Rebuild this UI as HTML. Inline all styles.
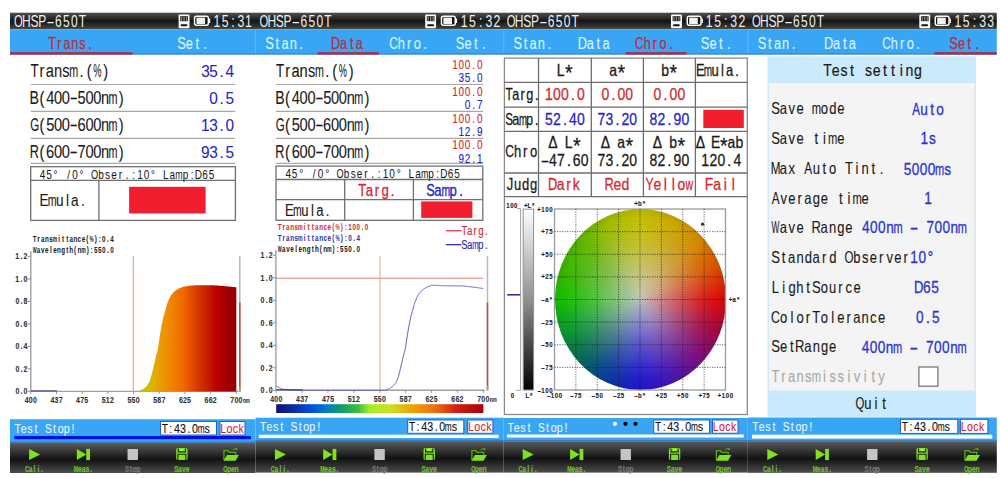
<!DOCTYPE html>
<html><head><meta charset="utf-8"><title>OHSP-650T</title>
<style>html,body{margin:0;padding:0;background:#fff;width:1000px;height:478px;overflow:hidden}svg{display:block}text{font-family:"Liberation Sans",sans-serif}</style>
</head><body>
<svg width="1000" height="478" viewBox="0 0 1000 478"><defs>
<linearGradient id="hdr" x1="0" y1="0" x2="0" y2="1"><stop offset="0" stop-color="#4e4e4c"/><stop offset="0.2" stop-color="#3a3a3a"/><stop offset="0.5" stop-color="#151515"/><stop offset="0.78" stop-color="#2c302c"/><stop offset="1" stop-color="#4a4e4a"/></linearGradient>
<linearGradient id="tb" x1="0" y1="0" x2="0" y2="1"><stop offset="0" stop-color="#5c5c5c"/><stop offset="0.55" stop-color="#121212"/><stop offset="1" stop-color="#4c4c4c"/></linearGradient>
<linearGradient id="fill1" x1="140" y1="0" x2="236" y2="0" gradientUnits="userSpaceOnUse"><stop offset="0" stop-color="#b8d000"/><stop offset="0.12" stop-color="#dcb400"/><stop offset="0.3" stop-color="#f08a00"/><stop offset="0.45" stop-color="#f06800"/><stop offset="0.62" stop-color="#d43400"/><stop offset="0.8" stop-color="#b80000"/><stop offset="1" stop-color="#900000"/></linearGradient>
<linearGradient id="spec" x1="0" y1="0" x2="1" y2="0"><stop offset="0" stop-color="#101070"/><stop offset="0.08" stop-color="#0a2ca0"/><stop offset="0.17" stop-color="#0050e0"/><stop offset="0.25" stop-color="#0080c0"/><stop offset="0.32" stop-color="#10a060"/><stop offset="0.4" stop-color="#40c040"/><stop offset="0.45" stop-color="#a0f020"/><stop offset="0.55" stop-color="#d0e020"/><stop offset="0.66" stop-color="#f0a000"/><stop offset="0.76" stop-color="#f07010"/><stop offset="0.87" stop-color="#d02010"/><stop offset="1" stop-color="#a80010"/></linearGradient>
<linearGradient id="lbar" x1="0" y1="0" x2="0" y2="1"><stop offset="0" stop-color="#ffffff"/><stop offset="0.5" stop-color="#909090"/><stop offset="1" stop-color="#000000"/></linearGradient>
</defs>
<rect x="0.00" y="0.00" width="1000.00" height="478.00" fill="#ffffff" />
<rect x="10.00" y="12.70" width="986.80" height="16.60" fill="url(#hdr)" />
<text transform="translate(0,27.00) scale(0.6560,1)" x="28.05" y="0" font-size="17.15" fill="#f0f0f0" text-anchor="middle" font-weight="normal" >O</text>
<text transform="translate(0,27.00) scale(0.7000,1)" x="37.71 49.15 60.32" y="0" font-size="17.15" fill="#f0f0f0" text-anchor="middle" font-weight="normal" >HSP</text>
<text transform="translate(0,27.00) scale(1.4902,1)" x="33.82" y="0" font-size="17.15" fill="#f0f0f0" text-anchor="middle" font-weight="normal" >-</text>
<text transform="translate(0,27.00) scale(0.7000,1)" x="83.37 94.87 106.29 117.72" y="0" font-size="17.15" fill="#f0f0f0" text-anchor="middle" font-weight="normal" >650T</text>
<rect x="178.60" y="14.60" width="10.9" height="13.6" rx="1.2" fill="#ffffff"/>
<rect x="180.20" y="16.20" width="7.70" height="5.00" fill="#141414" />
<rect x="180.90" y="16.60" width="1.30" height="4.20" fill="#8a8a8a" />
<rect x="183.40" y="16.60" width="1.30" height="4.20" fill="#8a8a8a" />
<rect x="185.90" y="16.60" width="1.30" height="4.20" fill="#8a8a8a" />
<rect x="180.60" y="24.30" width="6.8" height="1.9" rx="0.9" fill="#141414"/>
<rect x="194.55" y="16.15" width="13.8" height="9.2" rx="2" fill="#141414" stroke="#fff" stroke-width="1.5"/>
<rect x="196.50" y="17.60" width="8.60" height="6.40" fill="#f4f4f4" />
<rect x="209.00" y="18.60" width="1.20" height="4.40" fill="#fff" />
<text transform="translate(0,27.00) scale(0.7400,1)" x="293.21 304.12 314.76 325.47 335.86" y="0" font-size="16.57" fill="#f0f0f0" text-anchor="middle" font-weight="normal" >15:31</text>
<rect x="10.00" y="29.30" width="986.80" height="25.00" fill="#38a6f4" />
<text transform="translate(0,48.60) scale(0.7800,1)" x="66.80 76.13 85.93 96.01 105.84 115.51" y="0" font-size="16.43" fill="#c8283e" text-anchor="middle" font-weight="normal" stroke="#c8283e" stroke-width="0.3" >Trans.</text>
<text transform="translate(0,48.60) scale(0.7800,1)" x="232.63 242.77 252.82 263.01" y="0" font-size="16.43" fill="#d6f3ff" text-anchor="middle" font-weight="normal" stroke="#d6f3ff" stroke-width="0.2" >Set.</text>
<rect x="10.00" y="53.40" width="245.50" height="1.20" fill="#3c84c4" />
<rect x="10.00" y="52.10" width="122.60" height="2.50" fill="#a8304e" />
<text transform="translate(0,77.30) scale(0.7641,1)" x="45.19" y="0" font-size="17.44" fill="#1a1a1a" text-anchor="middle" font-weight="normal" stroke="#1a1a1a" stroke-width="0.1" >T</text>
<text transform="translate(0,77.30) scale(0.8400,1)" x="50.01 59.42 69.12 78.55" y="0" font-size="17.44" fill="#1a1a1a" text-anchor="middle" font-weight="normal" stroke="#1a1a1a" stroke-width="0.1" >rans</text>
<text transform="translate(0,77.30) scale(0.6166,1)" x="119.64" y="0" font-size="17.44" fill="#1a1a1a" text-anchor="middle" font-weight="normal" stroke="#1a1a1a" stroke-width="0.1" >m</text>
<text transform="translate(0,77.30) scale(0.8400,1)" x="97.17 106.03" y="0" font-size="17.44" fill="#1a1a1a" text-anchor="middle" font-weight="normal" stroke="#1a1a1a" stroke-width="0.1" >.(</text>
<text transform="translate(0,77.30) scale(0.5283,1)" x="184.22" y="0" font-size="17.44" fill="#1a1a1a" text-anchor="middle" font-weight="normal" stroke="#1a1a1a" stroke-width="0.1" >%</text>
<text transform="translate(0,77.30) scale(0.8400,1)" x="125.70" y="0" font-size="17.44" fill="#1a1a1a" text-anchor="middle" font-weight="normal" stroke="#1a1a1a" stroke-width="0.1" >)</text>
<text transform="translate(0,77.30) scale(0.9200,1)" x="223.28 232.11 240.95 249.86" y="0" font-size="16.71" fill="#2626c4" text-anchor="middle" font-weight="normal" stroke="#2626c4" stroke-width="0.1" >35.4</text>
<line x1="30.70" y1="84.50" x2="235.20" y2="84.50" stroke="#a8a8a8" stroke-width="1.2" />
<text transform="translate(0,104.20) scale(0.8118,1)" x="42.27" y="0" font-size="17.44" fill="#1a1a1a" text-anchor="middle" font-weight="normal" stroke="#1a1a1a" stroke-width="0.1" >B</text>
<text transform="translate(0,104.20) scale(0.8400,1)" x="49.96 59.85 69.14 78.48" y="0" font-size="17.44" fill="#1a1a1a" text-anchor="middle" font-weight="normal" stroke="#1a1a1a" stroke-width="0.1" >(400</text>
<text transform="translate(0,104.20) scale(1.4379,1)" x="51.31" y="0" font-size="17.44" fill="#1a1a1a" text-anchor="middle" font-weight="normal" stroke="#1a1a1a" stroke-width="0.1" >-</text>
<text transform="translate(0,104.20) scale(0.8400,1)" x="97.19 106.52 115.86 125.20" y="0" font-size="17.44" fill="#1a1a1a" text-anchor="middle" font-weight="normal" stroke="#1a1a1a" stroke-width="0.1" >500n</text>
<text transform="translate(0,104.20) scale(0.6166,1)" x="183.30" y="0" font-size="17.44" fill="#1a1a1a" text-anchor="middle" font-weight="normal" stroke="#1a1a1a" stroke-width="0.1" >m</text>
<text transform="translate(0,104.20) scale(0.8400,1)" x="144.39" y="0" font-size="17.44" fill="#1a1a1a" text-anchor="middle" font-weight="normal" stroke="#1a1a1a" stroke-width="0.1" >)</text>
<text transform="translate(0,104.20) scale(0.9200,1)" x="232.09 240.95 249.83" y="0" font-size="16.71" fill="#2626c4" text-anchor="middle" font-weight="normal" stroke="#2626c4" stroke-width="0.1" >0.5</text>
<line x1="30.70" y1="111.40" x2="235.20" y2="111.40" stroke="#a8a8a8" stroke-width="1.2" />
<text transform="translate(0,131.10) scale(0.6618,1)" x="52.38" y="0" font-size="17.44" fill="#1a1a1a" text-anchor="middle" font-weight="normal" stroke="#1a1a1a" stroke-width="0.1" >G</text>
<text transform="translate(0,131.10) scale(0.8400,1)" x="49.96 59.81 69.14 78.48" y="0" font-size="17.44" fill="#1a1a1a" text-anchor="middle" font-weight="normal" stroke="#1a1a1a" stroke-width="0.1" >(500</text>
<text transform="translate(0,131.10) scale(1.4379,1)" x="51.31" y="0" font-size="17.44" fill="#1a1a1a" text-anchor="middle" font-weight="normal" stroke="#1a1a1a" stroke-width="0.1" >-</text>
<text transform="translate(0,131.10) scale(0.8400,1)" x="97.11 106.52 115.86 125.20" y="0" font-size="17.44" fill="#1a1a1a" text-anchor="middle" font-weight="normal" stroke="#1a1a1a" stroke-width="0.1" >600n</text>
<text transform="translate(0,131.10) scale(0.6166,1)" x="183.30" y="0" font-size="17.44" fill="#1a1a1a" text-anchor="middle" font-weight="normal" stroke="#1a1a1a" stroke-width="0.1" >m</text>
<text transform="translate(0,131.10) scale(0.8400,1)" x="144.39" y="0" font-size="17.44" fill="#1a1a1a" text-anchor="middle" font-weight="normal" stroke="#1a1a1a" stroke-width="0.1" >)</text>
<text transform="translate(0,131.10) scale(0.9200,1)" x="223.01 232.14 240.95 249.81" y="0" font-size="16.71" fill="#2626c4" text-anchor="middle" font-weight="normal" stroke="#2626c4" stroke-width="0.1" >13.0</text>
<line x1="30.70" y1="138.30" x2="235.20" y2="138.30" stroke="#a8a8a8" stroke-width="1.2" />
<text transform="translate(0,158.00) scale(0.7277,1)" x="47.13" y="0" font-size="17.44" fill="#1a1a1a" text-anchor="middle" font-weight="normal" stroke="#1a1a1a" stroke-width="0.1" >R</text>
<text transform="translate(0,158.00) scale(0.8400,1)" x="49.96 59.73 69.14 78.48" y="0" font-size="17.44" fill="#1a1a1a" text-anchor="middle" font-weight="normal" stroke="#1a1a1a" stroke-width="0.1" >(600</text>
<text transform="translate(0,158.00) scale(1.4379,1)" x="51.31" y="0" font-size="17.44" fill="#1a1a1a" text-anchor="middle" font-weight="normal" stroke="#1a1a1a" stroke-width="0.1" >-</text>
<text transform="translate(0,158.00) scale(0.8400,1)" x="97.16 106.52 115.86 125.20" y="0" font-size="17.44" fill="#1a1a1a" text-anchor="middle" font-weight="normal" stroke="#1a1a1a" stroke-width="0.1" >700n</text>
<text transform="translate(0,158.00) scale(0.6166,1)" x="183.30" y="0" font-size="17.44" fill="#1a1a1a" text-anchor="middle" font-weight="normal" stroke="#1a1a1a" stroke-width="0.1" >m</text>
<text transform="translate(0,158.00) scale(0.8400,1)" x="144.39" y="0" font-size="17.44" fill="#1a1a1a" text-anchor="middle" font-weight="normal" stroke="#1a1a1a" stroke-width="0.1" >)</text>
<text transform="translate(0,158.00) scale(0.9200,1)" x="223.24 232.14 240.95 249.83" y="0" font-size="16.71" fill="#2626c4" text-anchor="middle" font-weight="normal" stroke="#2626c4" stroke-width="0.1" >93.5</text>
<line x1="30.70" y1="163.30" x2="235.20" y2="163.30" stroke="#a8a8a8" stroke-width="1.2" />
<rect x="30.7" y="166.7" width="204.7" height="53.7" fill="none" stroke="#707070" stroke-width="1.3"/>
<line x1="30.70" y1="180.30" x2="235.40" y2="180.30" stroke="#707070" stroke-width="1.3" />
<line x1="98.90" y1="180.30" x2="98.90" y2="220.40" stroke="#707070" stroke-width="1.3" />
<text transform="translate(0,178.60) scale(0.8000,1)" x="53.23 61.32 69.44 85.69 93.81 101.94" y="0" font-size="12.50" fill="#1a1a1a" text-anchor="middle" font-weight="normal" stroke="#1a1a1a" stroke-width="0.05" >45°/0°</text>
<text transform="translate(0,178.60) scale(0.7313,1)" x="129.29" y="0" font-size="12.50" fill="#1a1a1a" text-anchor="middle" font-weight="normal" stroke="#1a1a1a" stroke-width="0.05" >O</text>
<text transform="translate(0,178.60) scale(0.8000,1)" x="126.17 134.49 142.57 150.38 158.81 166.94 174.89 183.19 191.32 207.26 215.42" y="0" font-size="12.50" fill="#1a1a1a" text-anchor="middle" font-weight="normal" stroke="#1a1a1a" stroke-width="0.05" >bser.:10°La</text>
<text transform="translate(0,178.60) scale(0.7124,1)" x="251.33" y="0" font-size="12.50" fill="#1a1a1a" text-anchor="middle" font-weight="normal" stroke="#1a1a1a" stroke-width="0.05" >m</text>
<text transform="translate(0,178.60) scale(0.8000,1)" x="231.80 240.06 247.97 256.27 264.45" y="0" font-size="12.50" fill="#1a1a1a" text-anchor="middle" font-weight="normal" stroke="#1a1a1a" stroke-width="0.05" >p:D65</text>
<text transform="translate(0,206.30) scale(0.8000,1)" x="55.11" y="0" font-size="17.01" fill="#1a1a1a" text-anchor="middle" font-weight="normal" stroke="#1a1a1a" stroke-width="0.12" >E</text>
<text transform="translate(0,206.30) scale(0.6203,1)" x="83.91" y="0" font-size="17.01" fill="#1a1a1a" text-anchor="middle" font-weight="normal" stroke="#1a1a1a" stroke-width="0.12" >m</text>
<text transform="translate(0,206.30) scale(0.8000,1)" x="74.70 84.31 93.58 103.56" y="0" font-size="17.01" fill="#1a1a1a" text-anchor="middle" font-weight="normal" stroke="#1a1a1a" stroke-width="0.12" >ula.</text>
<rect x="129.10" y="186.80" width="76.50" height="26.60" fill="#f01e2e" />
<line x1="30.80" y1="251.30" x2="30.80" y2="391.40" stroke="#a0a0a0" stroke-width="1.4" />
<line x1="30.80" y1="391.40" x2="238.50" y2="391.40" stroke="#a0a0a0" stroke-width="1.4" />
<line x1="27.80" y1="391.40" x2="30.80" y2="391.40" stroke="#909090" stroke-width="1" />
<text transform="translate(0,394.30) scale(0.8000,1)" x="21.69 26.82 31.94" y="0" font-size="8.72" fill="#333" text-anchor="middle" font-weight="bold" stroke="#333" stroke-width="0.12" >0.0</text>
<line x1="27.80" y1="368.90" x2="30.80" y2="368.90" stroke="#909090" stroke-width="1" />
<text transform="translate(0,371.80) scale(0.8000,1)" x="21.69 26.82 31.96" y="0" font-size="8.72" fill="#333" text-anchor="middle" font-weight="bold" stroke="#333" stroke-width="0.12" >0.2</text>
<line x1="27.80" y1="346.40" x2="30.80" y2="346.40" stroke="#909090" stroke-width="1" />
<text transform="translate(0,349.30) scale(0.8000,1)" x="21.69 26.82 31.89" y="0" font-size="8.72" fill="#333" text-anchor="middle" font-weight="bold" stroke="#333" stroke-width="0.12" >0.4</text>
<line x1="27.80" y1="323.90" x2="30.80" y2="323.90" stroke="#909090" stroke-width="1" />
<text transform="translate(0,326.80) scale(0.8000,1)" x="21.69 26.82 31.94" y="0" font-size="8.72" fill="#333" text-anchor="middle" font-weight="bold" stroke="#333" stroke-width="0.12" >0.6</text>
<line x1="27.80" y1="301.40" x2="30.80" y2="301.40" stroke="#909090" stroke-width="1" />
<text transform="translate(0,304.30) scale(0.8000,1)" x="21.69 26.82 31.93" y="0" font-size="8.72" fill="#333" text-anchor="middle" font-weight="bold" stroke="#333" stroke-width="0.12" >0.8</text>
<line x1="27.80" y1="278.90" x2="30.80" y2="278.90" stroke="#909090" stroke-width="1" />
<text transform="translate(0,281.80) scale(0.8000,1)" x="21.53 26.82 31.94" y="0" font-size="8.72" fill="#333" text-anchor="middle" font-weight="bold" stroke="#333" stroke-width="0.12" >1.0</text>
<line x1="27.80" y1="256.40" x2="30.80" y2="256.40" stroke="#909090" stroke-width="1" />
<text transform="translate(0,259.30) scale(0.8000,1)" x="21.53 26.82 31.96" y="0" font-size="8.72" fill="#333" text-anchor="middle" font-weight="bold" stroke="#333" stroke-width="0.12" >1.2</text>
<line x1="30.80" y1="391.40" x2="30.80" y2="393.90" stroke="#909090" stroke-width="1" />
<text transform="translate(0,402.60) scale(0.8000,1)" x="33.33 38.51 43.63" y="0" font-size="8.72" fill="#333" text-anchor="middle" font-weight="bold" stroke="#333" stroke-width="0.12" >400</text>
<line x1="56.49" y1="391.40" x2="56.49" y2="393.90" stroke="#909090" stroke-width="1" />
<text transform="translate(0,402.60) scale(0.8000,1)" x="65.44 70.67 75.74" y="0" font-size="8.72" fill="#333" text-anchor="middle" font-weight="bold" stroke="#333" stroke-width="0.12" >437</text>
<line x1="82.18" y1="391.40" x2="82.18" y2="393.90" stroke="#909090" stroke-width="1" />
<text transform="translate(0,402.60) scale(0.8000,1)" x="97.56 102.73 107.84" y="0" font-size="8.72" fill="#333" text-anchor="middle" font-weight="bold" stroke="#333" stroke-width="0.12" >475</text>
<line x1="107.87" y1="391.40" x2="107.87" y2="393.90" stroke="#909090" stroke-width="1" />
<text transform="translate(0,402.60) scale(0.8000,1)" x="129.70 134.68 139.99" y="0" font-size="8.72" fill="#333" text-anchor="middle" font-weight="bold" stroke="#333" stroke-width="0.12" >512</text>
<line x1="133.56" y1="391.40" x2="133.56" y2="393.90" stroke="#909090" stroke-width="1" />
<text transform="translate(0,402.60) scale(0.8000,1)" x="161.81 166.94 172.08" y="0" font-size="8.72" fill="#333" text-anchor="middle" font-weight="bold" stroke="#333" stroke-width="0.12" >550</text>
<line x1="159.25" y1="391.40" x2="159.25" y2="393.90" stroke="#909090" stroke-width="1" />
<text transform="translate(0,402.60) scale(0.8000,1)" x="193.92 199.06 204.19" y="0" font-size="8.72" fill="#333" text-anchor="middle" font-weight="bold" stroke="#333" stroke-width="0.12" >587</text>
<line x1="184.94" y1="391.40" x2="184.94" y2="393.90" stroke="#909090" stroke-width="1" />
<text transform="translate(0,402.60) scale(0.8000,1)" x="226.05 231.20 236.29" y="0" font-size="8.72" fill="#333" text-anchor="middle" font-weight="bold" stroke="#333" stroke-width="0.12" >625</text>
<line x1="210.63" y1="391.40" x2="210.63" y2="393.90" stroke="#909090" stroke-width="1" />
<text transform="translate(0,402.60) scale(0.8000,1)" x="258.16 263.29 268.44" y="0" font-size="8.72" fill="#333" text-anchor="middle" font-weight="bold" stroke="#333" stroke-width="0.12" >662</text>
<line x1="236.32" y1="391.40" x2="236.32" y2="393.90" stroke="#909090" stroke-width="1" />
<text transform="translate(0,402.60) scale(0.8000,1)" x="290.28 295.41 300.53" y="0" font-size="8.72" fill="#333" text-anchor="middle" font-weight="bold" stroke="#333" stroke-width="0.12" >700</text>
<text transform="translate(0,402.60) scale(0.8000,1)" x="305.64" y="0" font-size="6.54" fill="#333" text-anchor="middle" font-weight="bold" stroke="#333" stroke-width="0.12" >n</text>
<text transform="translate(0,402.60) scale(0.6555,1)" x="378.20" y="0" font-size="6.54" fill="#333" text-anchor="middle" font-weight="bold" stroke="#333" stroke-width="0.12" >m</text>
<text transform="translate(0,241.90) scale(0.7200,1)" x="48.10 53.54 59.25 65.05 70.74" y="0" font-size="8.72" fill="#222" text-anchor="middle" font-weight="bold" stroke="#222" stroke-width="0.05" >Trans</text>
<text transform="translate(0,241.90) scale(0.5885,1)" x="93.42" y="0" font-size="8.72" fill="#222" text-anchor="middle" font-weight="bold" stroke="#222" stroke-width="0.05" >m</text>
<text transform="translate(0,241.90) scale(0.7200,1)" x="82.03 87.67 93.33 98.82 104.61 110.24 115.92 121.38" y="0" font-size="8.72" fill="#222" text-anchor="middle" font-weight="bold" stroke="#222" stroke-width="0.05" >ittance(</text>
<text transform="translate(0,241.90) scale(0.5347,1)" x="171.35" y="0" font-size="8.72" fill="#222" text-anchor="middle" font-weight="bold" stroke="#222" stroke-width="0.05" >%</text>
<text transform="translate(0,241.90) scale(0.7200,1)" x="133.11 138.55 144.21 149.86 155.46" y="0" font-size="8.72" fill="#222" text-anchor="middle" font-weight="bold" stroke="#222" stroke-width="0.05" >):0.4</text>
<text transform="translate(0,252.90) scale(0.4757,1)" x="72.81" y="0" font-size="8.72" fill="#222" text-anchor="middle" font-weight="bold" stroke="#222" stroke-width="0.05" >W</text>
<text transform="translate(0,252.90) scale(0.7200,1)" x="53.60 59.41 65.04 70.72 76.35 82.00 87.79 93.33 98.95 104.42 110.27" y="0" font-size="8.72" fill="#222" text-anchor="middle" font-weight="bold" stroke="#222" stroke-width="0.05" >avelength(n</text>
<text transform="translate(0,252.90) scale(0.5885,1)" x="141.83" y="0" font-size="8.72" fill="#222" text-anchor="middle" font-weight="bold" stroke="#222" stroke-width="0.05" >m</text>
<text transform="translate(0,252.90) scale(0.7200,1)" x="121.80 127.24 132.88 138.54 144.21 149.86 155.51" y="0" font-size="8.72" fill="#222" text-anchor="middle" font-weight="bold" stroke="#222" stroke-width="0.05" >):550.0</text>
<path d="M136.30,391.40 L136.30,391.40 L136.64,391.40 L136.99,391.40 L137.33,391.38 L137.67,391.33 L138.01,391.24 L138.36,391.14 L138.70,391.02 L139.04,390.88 L139.38,390.74 L139.73,390.61 L140.07,390.47 L140.41,390.34 L140.75,390.20 L141.10,390.05 L141.44,389.88 L141.78,389.71 L142.12,389.53 L142.47,389.34 L142.81,389.14 L143.15,388.92 L143.49,388.70 L143.84,388.46 L144.18,388.21 L144.52,387.95 L144.86,387.67 L145.21,387.38 L145.55,387.07 L145.89,386.74 L146.23,386.39 L146.58,386.02 L146.92,385.63 L147.26,385.22 L147.60,384.79 L147.95,384.30 L148.29,383.75 L148.63,383.15 L148.97,382.48 L149.32,381.76 L149.66,380.98 L150.00,380.15 L150.34,379.19 L150.69,378.07 L151.03,376.83 L151.37,375.51 L151.71,374.17 L152.06,372.84 L152.40,371.51 L152.74,370.13 L153.08,368.73 L153.43,367.30 L153.77,365.85 L154.11,364.40 L154.45,362.92 L154.80,361.39 L155.14,359.84 L155.48,358.31 L155.82,356.82 L156.17,355.40 L156.51,354.12 L156.85,352.94 L157.19,351.74 L157.54,350.39 L157.88,348.75 L158.22,346.75 L158.56,344.51 L158.91,342.11 L159.25,339.68 L159.59,337.33 L159.94,335.15 L160.28,333.10 L160.62,331.06 L160.96,329.06 L161.31,327.10 L161.65,325.22 L161.99,323.42 L162.33,321.73 L162.68,320.16 L163.02,318.69 L163.36,317.29 L163.70,315.96 L164.05,314.67 L164.39,313.40 L164.73,312.15 L165.07,310.89 L165.42,309.63 L165.76,308.38 L166.10,307.17 L166.44,306.00 L166.79,304.89 L167.13,303.84 L167.47,302.88 L167.81,302.00 L168.16,301.16 L168.50,300.34 L168.84,299.55 L169.18,298.79 L169.53,298.06 L169.87,297.38 L170.21,296.73 L170.55,296.13 L170.90,295.57 L171.24,295.06 L171.58,294.60 L171.92,294.15 L172.27,293.72 L172.61,293.31 L172.95,292.91 L173.29,292.53 L173.64,292.17 L173.98,291.83 L174.32,291.50 L174.66,291.19 L175.01,290.90 L175.35,290.63 L175.69,290.37 L176.03,290.14 L176.38,289.92 L176.72,289.72 L177.06,289.52 L177.40,289.33 L177.75,289.14 L178.09,288.95 L178.43,288.77 L178.77,288.59 L179.12,288.42 L179.46,288.25 L179.80,288.09 L180.14,287.93 L180.49,287.78 L180.83,287.63 L181.17,287.50 L181.51,287.36 L181.86,287.24 L182.20,287.12 L182.54,287.01 L182.88,286.90 L183.23,286.81 L183.57,286.72 L183.91,286.63 L184.25,286.56 L184.60,286.49 L184.94,286.44 L185.28,286.38 L185.63,286.33 L185.97,286.28 L186.31,286.23 L186.65,286.18 L187.00,286.13 L187.34,286.08 L187.68,286.04 L188.02,285.99 L188.37,285.94 L188.71,285.90 L189.05,285.86 L189.39,285.81 L189.74,285.77 L190.08,285.73 L190.42,285.70 L190.76,285.66 L191.11,285.62 L191.45,285.59 L191.79,285.55 L192.13,285.52 L192.48,285.49 L192.82,285.46 L193.16,285.43 L193.50,285.40 L193.85,285.38 L194.19,285.36 L194.53,285.33 L194.87,285.31 L195.22,285.29 L195.56,285.28 L195.90,285.26 L196.24,285.25 L196.59,285.23 L196.93,285.22 L197.27,285.22 L197.61,285.21 L197.96,285.20 L198.30,285.20 L198.64,285.20 L198.98,285.20 L199.33,285.20 L199.67,285.20 L200.01,285.20 L200.35,285.20 L200.70,285.20 L201.04,285.20 L201.38,285.21 L201.72,285.21 L202.07,285.21 L202.41,285.21 L202.75,285.21 L203.09,285.21 L203.44,285.22 L203.78,285.22 L204.12,285.22 L204.46,285.22 L204.81,285.23 L205.15,285.23 L205.49,285.23 L205.83,285.23 L206.18,285.24 L206.52,285.24 L206.86,285.24 L207.20,285.25 L207.55,285.25 L207.89,285.25 L208.23,285.26 L208.57,285.26 L208.92,285.27 L209.26,285.27 L209.60,285.28 L209.94,285.28 L210.29,285.28 L210.63,285.29 L210.97,285.29 L211.32,285.30 L211.66,285.30 L212.00,285.31 L212.34,285.31 L212.69,285.32 L213.03,285.33 L213.37,285.33 L213.71,285.35 L214.06,285.36 L214.40,285.37 L214.74,285.38 L215.08,285.40 L215.43,285.42 L215.77,285.44 L216.11,285.46 L216.45,285.48 L216.80,285.50 L217.14,285.52 L217.48,285.54 L217.82,285.57 L218.17,285.59 L218.51,285.62 L218.85,285.64 L219.19,285.67 L219.54,285.70 L219.88,285.73 L220.22,285.76 L220.56,285.79 L220.91,285.81 L221.25,285.84 L221.59,285.87 L221.93,285.91 L222.28,285.94 L222.62,285.97 L222.96,286.00 L223.30,286.03 L223.65,286.06 L223.99,286.09 L224.33,286.12 L224.67,286.15 L225.02,286.18 L225.36,286.21 L225.70,286.24 L226.04,286.27 L226.39,286.30 L226.73,286.33 L227.07,286.36 L227.41,286.39 L227.76,286.42 L228.10,286.46 L228.44,286.49 L228.78,286.52 L229.13,286.56 L229.47,286.60 L229.81,286.63 L230.15,286.67 L230.50,286.70 L230.84,286.74 L231.18,286.78 L231.52,286.82 L231.87,286.85 L232.21,286.89 L232.55,286.93 L232.89,286.97 L233.24,287.00 L233.58,287.04 L233.92,287.08 L234.26,287.12 L234.61,287.15 L234.95,287.19 L235.29,287.23 L235.63,287.27 L235.98,287.30 L236.32,287.34 L236.32,391.40 z" fill="url(#fill1)"/>
<line x1="133.40" y1="256.20" x2="133.40" y2="391.40" stroke="#d8b49a" stroke-width="1.4" />
<line x1="239.80" y1="256.20" x2="239.80" y2="391.40" stroke="#b8b8b8" stroke-width="1.5" />
<line x1="239.80" y1="302.60" x2="239.80" y2="391.40" stroke="#d04050" stroke-width="1.5" />
<line x1="239.80" y1="386.80" x2="239.80" y2="391.40" stroke="#60d060" stroke-width="1.5" />
<line x1="31.00" y1="390.90" x2="57.00" y2="390.90" stroke="#30308a" stroke-width="1.0" />
<rect x="10.00" y="419.20" width="245.50" height="23.60" fill="#38a6f4" />
<text transform="translate(0,432.80) scale(0.7808,1)" x="22.64" y="0" font-size="13.37" fill="#e6f4ff" text-anchor="middle" font-weight="normal" stroke="#e6f4ff" stroke-width="0.12" >T</text>
<text transform="translate(0,432.80) scale(0.8000,1)" x="29.79 37.52 45.10" y="0" font-size="13.37" fill="#e6f4ff" text-anchor="middle" font-weight="normal" stroke="#e6f4ff" stroke-width="0.12" >est</text>
<text transform="translate(0,432.80) scale(0.7669,1)" x="63.15" y="0" font-size="13.37" fill="#e6f4ff" text-anchor="middle" font-weight="normal" stroke="#e6f4ff" stroke-width="0.12" >S</text>
<text transform="translate(0,432.80) scale(0.8000,1)" x="68.17 75.91 83.44 91.28" y="0" font-size="13.37" fill="#e6f4ff" text-anchor="middle" font-weight="normal" stroke="#e6f4ff" stroke-width="0.12" >top!</text>
<rect x="160.50" y="421.50" width="56.00" height="13.50" fill="#ffffff" stroke="#1f63c6" stroke-width="1"/>
<text transform="translate(0,432.80) scale(0.7681,1)" x="214.59" y="0" font-size="13.37" fill="#111" text-anchor="middle" font-weight="normal" stroke="#111" stroke-width="0.12" >T</text>
<text transform="translate(0,432.80) scale(0.8000,1)" x="213.59 221.20 228.76 236.28 243.84" y="0" font-size="13.37" fill="#111" text-anchor="middle" font-weight="normal" stroke="#111" stroke-width="0.12" >:43.0</text>
<text transform="translate(0,432.80) scale(0.6199,1)" x="324.44" y="0" font-size="13.37" fill="#111" text-anchor="middle" font-weight="normal" stroke="#111" stroke-width="0.12" >m</text>
<text transform="translate(0,432.80) scale(0.8000,1)" x="259.02" y="0" font-size="13.37" fill="#111" text-anchor="middle" font-weight="normal" stroke="#111" stroke-width="0.12" >s</text>
<rect x="220.00" y="421.50" width="25.00" height="13.50" fill="#ffffff" stroke="#1f63c6" stroke-width="1"/>
<text transform="translate(0,432.80) scale(0.8000,1)" x="279.17 287.00 294.39 301.54" y="0" font-size="13.37" fill="#d42836" text-anchor="middle" font-weight="normal" stroke="#d42836" stroke-width="0.12" >Lock</text>
<rect x="10.00" y="441.50" width="245.50" height="1.30" fill="#3a7cba" />
<rect x="14.30" y="436.00" width="236.70" height="3.20" fill="#0010e0" />
<rect x="10.00" y="442.80" width="245.50" height="30.20" fill="url(#tb)" />
<path d="M29.15,448.90 L40.15,454.50 L29.15,460.10 z" fill="#7ee21c"/>
<path d="M76.85,448.90 L86.25,454.50 L76.85,460.10 z" fill="#7ee21c"/>
<rect x="86.25" y="448.90" width="3.80" height="11.20" fill="#7ee21c" />
<rect x="127.55" y="449.00" width="10.40" height="11.00" fill="#c4c4c4" />
<rect x="176.15" y="448.10" width="11.4" height="12.0" rx="1.6" fill="#7ee21c"/>
<path d="M178.25,448.50 V451.90 H185.45 V448.50" fill="none" stroke="#1c2a10" stroke-width="1.1"/>
<rect x="180.25" y="448.90" width="3.00" height="2.00" fill="#a8f060" />
<path d="M177.85,459.90 V454.30 H185.85 V459.90" fill="none" stroke="#1c2a10" stroke-width="1.1"/>
<path d="M223.95,460.30 L223.95,450.70 L227.95,450.70 L229.35,452.30 L235.75,452.30 L235.75,454.70" fill="none" stroke="#5aa818" stroke-width="1.3"/>
<path d="M223.55,460.70 L226.95,454.90 L238.95,454.90 L235.55,460.70 z" fill="#7ee21c"/>
<circle cx="236.55" cy="449.10" r="1.1" fill="#5aa818"/>
<path d="M232.55,450.30 Q234.55,447.90 235.95,448.70" fill="none" stroke="#5aa818" stroke-width="1"/>
<text transform="translate(0,471.60) scale(0.6618,1)" x="40.66" y="0" font-size="8.43" fill="#6cc81e" text-anchor="middle" font-weight="bold" stroke="#6cc81e" stroke-width="0.12" >C</text>
<text transform="translate(0,471.60) scale(0.8000,1)" x="38.29 43.19 47.94 52.69" y="0" font-size="8.43" fill="#6cc81e" text-anchor="middle" font-weight="bold" stroke="#6cc81e" stroke-width="0.12" >ali.</text>
<text transform="translate(0,471.60) scale(0.6189,1)" x="122.88" y="0" font-size="8.43" fill="#6cc81e" text-anchor="middle" font-weight="bold" stroke="#6cc81e" stroke-width="0.12" >M</text>
<text transform="translate(0,471.60) scale(0.8000,1)" x="99.79 104.41 109.34 114.07" y="0" font-size="8.43" fill="#6cc81e" text-anchor="middle" font-weight="bold" stroke="#6cc81e" stroke-width="0.12" >eas.</text>
<text transform="translate(0,471.60) scale(0.7223,1)" x="175.94" y="0" font-size="8.43" fill="#7c7c7c" text-anchor="middle" font-weight="bold" stroke="#7c7c7c" stroke-width="0.12" >S</text>
<text transform="translate(0,471.60) scale(0.8000,1)" x="163.56 168.31 172.96" y="0" font-size="8.43" fill="#7c7c7c" text-anchor="middle" font-weight="bold" stroke="#7c7c7c" stroke-width="0.12" >top</text>
<text transform="translate(0,471.60) scale(0.7223,1)" x="243.92" y="0" font-size="8.43" fill="#6cc81e" text-anchor="middle" font-weight="bold" stroke="#6cc81e" stroke-width="0.12" >S</text>
<text transform="translate(0,471.60) scale(0.8000,1)" x="224.79" y="0" font-size="8.43" fill="#6cc81e" text-anchor="middle" font-weight="bold" stroke="#6cc81e" stroke-width="0.12" >a</text>
<text transform="translate(0,471.60) scale(0.7899,1)" x="232.63" y="0" font-size="8.43" fill="#6cc81e" text-anchor="middle" font-weight="bold" stroke="#6cc81e" stroke-width="0.12" >v</text>
<text transform="translate(0,471.60) scale(0.8000,1)" x="234.42" y="0" font-size="8.43" fill="#6cc81e" text-anchor="middle" font-weight="bold" stroke="#6cc81e" stroke-width="0.12" >e</text>
<text transform="translate(0,471.60) scale(0.6228,1)" x="361.68" y="0" font-size="8.43" fill="#6cc81e" text-anchor="middle" font-weight="bold" stroke="#6cc81e" stroke-width="0.12" >O</text>
<text transform="translate(0,471.60) scale(0.8000,1)" x="286.21 291.04 295.80" y="0" font-size="8.43" fill="#6cc81e" text-anchor="middle" font-weight="bold" stroke="#6cc81e" stroke-width="0.12" >pen</text>
<text transform="translate(0,27.00) scale(0.6560,1)" x="402.14" y="0" font-size="17.15" fill="#f0f0f0" text-anchor="middle" font-weight="normal" >O</text>
<text transform="translate(0,27.00) scale(0.7000,1)" x="388.28 399.72 410.89" y="0" font-size="17.15" fill="#f0f0f0" text-anchor="middle" font-weight="normal" >HSP</text>
<text transform="translate(0,27.00) scale(1.4902,1)" x="198.50" y="0" font-size="17.15" fill="#f0f0f0" text-anchor="middle" font-weight="normal" >-</text>
<text transform="translate(0,27.00) scale(0.7000,1)" x="433.94 445.45 456.86 468.29" y="0" font-size="17.15" fill="#f0f0f0" text-anchor="middle" font-weight="normal" >650T</text>
<rect x="425.20" y="14.60" width="10.9" height="13.6" rx="1.2" fill="#ffffff"/>
<rect x="426.80" y="16.20" width="7.70" height="5.00" fill="#141414" />
<rect x="427.50" y="16.60" width="1.30" height="4.20" fill="#8a8a8a" />
<rect x="430.00" y="16.60" width="1.30" height="4.20" fill="#8a8a8a" />
<rect x="432.50" y="16.60" width="1.30" height="4.20" fill="#8a8a8a" />
<rect x="427.20" y="24.30" width="6.8" height="1.9" rx="0.9" fill="#141414"/>
<rect x="441.45" y="16.15" width="13.8" height="9.2" rx="2" fill="#141414" stroke="#fff" stroke-width="1.5"/>
<rect x="443.40" y="17.60" width="8.60" height="6.40" fill="#f4f4f4" />
<rect x="455.90" y="18.60" width="1.20" height="4.40" fill="#fff" />
<text transform="translate(0,27.00) scale(0.7400,1)" x="627.31 638.56 649.56 660.62 671.59" y="0" font-size="16.57" fill="#f0f0f0" text-anchor="middle" font-weight="normal" >15:32</text>
<rect x="254.90" y="30.00" width="1.20" height="23.00" fill="#5cb4f0" />
<text transform="translate(0,48.60) scale(0.7800,1)" x="345.58 355.64 365.48 375.95 386.09" y="0" font-size="16.43" fill="#d6f3ff" text-anchor="middle" font-weight="normal" stroke="#d6f3ff" stroke-width="0.2" >Stan.</text>
<text transform="translate(0,48.60) scale(0.7796,1)" x="430.65" y="0" font-size="16.43" fill="#c8283e" text-anchor="middle" font-weight="normal" stroke="#c8283e" stroke-width="0.3" >D</text>
<text transform="translate(0,48.60) scale(0.7800,1)" x="440.48 450.90 460.74" y="0" font-size="16.43" fill="#c8283e" text-anchor="middle" font-weight="normal" stroke="#c8283e" stroke-width="0.3" >ata</text>
<text transform="translate(0,48.60) scale(0.7291,1)" x="539.67" y="0" font-size="16.43" fill="#d6f3ff" text-anchor="middle" font-weight="normal" stroke="#d6f3ff" stroke-width="0.2" >C</text>
<text transform="translate(0,48.60) scale(0.7800,1)" x="514.64 524.40 534.94 545.06" y="0" font-size="16.43" fill="#d6f3ff" text-anchor="middle" font-weight="normal" stroke="#d6f3ff" stroke-width="0.2" >hro.</text>
<text transform="translate(0,48.60) scale(0.7800,1)" x="589.81 599.95 610.00 620.19" y="0" font-size="16.43" fill="#d6f3ff" text-anchor="middle" font-weight="normal" stroke="#d6f3ff" stroke-width="0.2" >Set.</text>
<rect x="255.50" y="53.40" width="248.20" height="1.20" fill="#3c84c4" />
<rect x="317.60" y="52.10" width="61.10" height="2.50" fill="#a8304e" />
<text transform="translate(0,77.30) scale(0.7641,1)" x="366.61" y="0" font-size="17.44" fill="#1a1a1a" text-anchor="middle" font-weight="normal" stroke="#1a1a1a" stroke-width="0.1" >T</text>
<text transform="translate(0,77.30) scale(0.8400,1)" x="342.39 351.80 361.51 370.94" y="0" font-size="17.44" fill="#1a1a1a" text-anchor="middle" font-weight="normal" stroke="#1a1a1a" stroke-width="0.1" >rans</text>
<text transform="translate(0,77.30) scale(0.6166,1)" x="517.96" y="0" font-size="17.44" fill="#1a1a1a" text-anchor="middle" font-weight="normal" stroke="#1a1a1a" stroke-width="0.1" >m</text>
<text transform="translate(0,77.30) scale(0.8400,1)" x="389.55 398.41" y="0" font-size="17.44" fill="#1a1a1a" text-anchor="middle" font-weight="normal" stroke="#1a1a1a" stroke-width="0.1" >.(</text>
<text transform="translate(0,77.30) scale(0.5283,1)" x="649.11" y="0" font-size="17.44" fill="#1a1a1a" text-anchor="middle" font-weight="normal" stroke="#1a1a1a" stroke-width="0.1" >%</text>
<text transform="translate(0,77.30) scale(0.8400,1)" x="418.08" y="0" font-size="17.44" fill="#1a1a1a" text-anchor="middle" font-weight="normal" stroke="#1a1a1a" stroke-width="0.1" >)</text>
<line x1="276.00" y1="84.50" x2="483.00" y2="84.50" stroke="#a8a8a8" stroke-width="1.2" />
<text transform="translate(0,104.20) scale(0.8118,1)" x="344.81" y="0" font-size="17.44" fill="#1a1a1a" text-anchor="middle" font-weight="normal" stroke="#1a1a1a" stroke-width="0.1" >B</text>
<text transform="translate(0,104.20) scale(0.8400,1)" x="342.34 352.23 361.52 370.86" y="0" font-size="17.44" fill="#1a1a1a" text-anchor="middle" font-weight="normal" stroke="#1a1a1a" stroke-width="0.1" >(400</text>
<text transform="translate(0,104.20) scale(1.4379,1)" x="222.11" y="0" font-size="17.44" fill="#1a1a1a" text-anchor="middle" font-weight="normal" stroke="#1a1a1a" stroke-width="0.1" >-</text>
<text transform="translate(0,104.20) scale(0.8400,1)" x="389.57 398.90 408.24 417.58" y="0" font-size="17.44" fill="#1a1a1a" text-anchor="middle" font-weight="normal" stroke="#1a1a1a" stroke-width="0.1" >500n</text>
<text transform="translate(0,104.20) scale(0.6166,1)" x="581.61" y="0" font-size="17.44" fill="#1a1a1a" text-anchor="middle" font-weight="normal" stroke="#1a1a1a" stroke-width="0.1" >m</text>
<text transform="translate(0,104.20) scale(0.8400,1)" x="436.77" y="0" font-size="17.44" fill="#1a1a1a" text-anchor="middle" font-weight="normal" stroke="#1a1a1a" stroke-width="0.1" >)</text>
<line x1="276.00" y1="111.40" x2="483.00" y2="111.40" stroke="#a8a8a8" stroke-width="1.2" />
<text transform="translate(0,131.10) scale(0.6618,1)" x="423.49" y="0" font-size="17.44" fill="#1a1a1a" text-anchor="middle" font-weight="normal" stroke="#1a1a1a" stroke-width="0.1" >G</text>
<text transform="translate(0,131.10) scale(0.8400,1)" x="342.34 352.19 361.52 370.86" y="0" font-size="17.44" fill="#1a1a1a" text-anchor="middle" font-weight="normal" stroke="#1a1a1a" stroke-width="0.1" >(500</text>
<text transform="translate(0,131.10) scale(1.4379,1)" x="222.11" y="0" font-size="17.44" fill="#1a1a1a" text-anchor="middle" font-weight="normal" stroke="#1a1a1a" stroke-width="0.1" >-</text>
<text transform="translate(0,131.10) scale(0.8400,1)" x="389.49 398.90 408.24 417.58" y="0" font-size="17.44" fill="#1a1a1a" text-anchor="middle" font-weight="normal" stroke="#1a1a1a" stroke-width="0.1" >600n</text>
<text transform="translate(0,131.10) scale(0.6166,1)" x="581.61" y="0" font-size="17.44" fill="#1a1a1a" text-anchor="middle" font-weight="normal" stroke="#1a1a1a" stroke-width="0.1" >m</text>
<text transform="translate(0,131.10) scale(0.8400,1)" x="436.77" y="0" font-size="17.44" fill="#1a1a1a" text-anchor="middle" font-weight="normal" stroke="#1a1a1a" stroke-width="0.1" >)</text>
<line x1="276.00" y1="138.30" x2="483.00" y2="138.30" stroke="#a8a8a8" stroke-width="1.2" />
<text transform="translate(0,158.00) scale(0.7277,1)" x="384.63" y="0" font-size="17.44" fill="#1a1a1a" text-anchor="middle" font-weight="normal" stroke="#1a1a1a" stroke-width="0.1" >R</text>
<text transform="translate(0,158.00) scale(0.8400,1)" x="342.34 352.11 361.52 370.86" y="0" font-size="17.44" fill="#1a1a1a" text-anchor="middle" font-weight="normal" stroke="#1a1a1a" stroke-width="0.1" >(600</text>
<text transform="translate(0,158.00) scale(1.4379,1)" x="222.11" y="0" font-size="17.44" fill="#1a1a1a" text-anchor="middle" font-weight="normal" stroke="#1a1a1a" stroke-width="0.1" >-</text>
<text transform="translate(0,158.00) scale(0.8400,1)" x="389.55 398.90 408.24 417.58" y="0" font-size="17.44" fill="#1a1a1a" text-anchor="middle" font-weight="normal" stroke="#1a1a1a" stroke-width="0.1" >700n</text>
<text transform="translate(0,158.00) scale(0.6166,1)" x="581.61" y="0" font-size="17.44" fill="#1a1a1a" text-anchor="middle" font-weight="normal" stroke="#1a1a1a" stroke-width="0.1" >m</text>
<text transform="translate(0,158.00) scale(0.8400,1)" x="436.77" y="0" font-size="17.44" fill="#1a1a1a" text-anchor="middle" font-weight="normal" stroke="#1a1a1a" stroke-width="0.1" >)</text>
<line x1="276.00" y1="163.30" x2="483.00" y2="163.30" stroke="#a8a8a8" stroke-width="1.2" />
<text transform="translate(0,69.30) scale(0.8000,1)" x="568.86 576.72 584.41 592.09 599.78" y="0" font-size="12.50" fill="#d02a30" text-anchor="middle" font-weight="normal" stroke="#d02a30" stroke-width="0.12" >100.0</text>
<text transform="translate(0,82.10) scale(0.8000,1)" x="576.76 584.42 592.09 599.78" y="0" font-size="12.50" fill="#2626c4" text-anchor="middle" font-weight="normal" stroke="#2626c4" stroke-width="0.12" >35.0</text>
<text transform="translate(0,95.90) scale(0.8000,1)" x="568.86 576.72 584.41 592.09 599.78" y="0" font-size="12.50" fill="#d02a30" text-anchor="middle" font-weight="normal" stroke="#d02a30" stroke-width="0.12" >100.0</text>
<text transform="translate(0,108.60) scale(0.8000,1)" x="584.41 592.09 599.78" y="0" font-size="12.50" fill="#2626c4" text-anchor="middle" font-weight="normal" stroke="#2626c4" stroke-width="0.12" >0.7</text>
<text transform="translate(0,122.80) scale(0.8000,1)" x="568.86 576.72 584.41 592.09 599.78" y="0" font-size="12.50" fill="#d02a30" text-anchor="middle" font-weight="normal" stroke="#d02a30" stroke-width="0.12" >100.0</text>
<text transform="translate(0,135.50) scale(0.8000,1)" x="576.55 584.41 592.09 599.78" y="0" font-size="12.50" fill="#2626c4" text-anchor="middle" font-weight="normal" stroke="#2626c4" stroke-width="0.12" >12.9</text>
<text transform="translate(0,149.30) scale(0.8000,1)" x="568.86 576.72 584.41 592.09 599.78" y="0" font-size="12.50" fill="#d02a30" text-anchor="middle" font-weight="normal" stroke="#d02a30" stroke-width="0.12" >100.0</text>
<text transform="translate(0,162.60) scale(0.8000,1)" x="576.72 584.41 592.09 599.61" y="0" font-size="12.50" fill="#2626c4" text-anchor="middle" font-weight="normal" stroke="#2626c4" stroke-width="0.12" >92.1</text>
<rect x="276.0" y="166.1" width="206.8" height="54.2" fill="none" stroke="#707070" stroke-width="1.3"/>
<line x1="276.00" y1="179.50" x2="482.80" y2="179.50" stroke="#707070" stroke-width="1.3" />
<line x1="276.00" y1="199.60" x2="482.80" y2="199.60" stroke="#707070" stroke-width="1.3" />
<line x1="344.70" y1="179.50" x2="344.70" y2="220.30" stroke="#707070" stroke-width="1.3" />
<line x1="413.40" y1="179.50" x2="413.40" y2="220.30" stroke="#707070" stroke-width="1.3" />
<text transform="translate(0,178.20) scale(0.8000,1)" x="360.23 368.32 376.44 392.69 400.81 408.94" y="0" font-size="12.50" fill="#1a1a1a" text-anchor="middle" font-weight="normal" stroke="#1a1a1a" stroke-width="0.05" >45°/0°</text>
<text transform="translate(0,178.20) scale(0.7313,1)" x="465.13" y="0" font-size="12.50" fill="#1a1a1a" text-anchor="middle" font-weight="normal" stroke="#1a1a1a" stroke-width="0.05" >O</text>
<text transform="translate(0,178.20) scale(0.8000,1)" x="433.17 441.49 449.57 457.38 465.81 473.94 481.89 490.19 498.32 514.26 522.42" y="0" font-size="12.50" fill="#1a1a1a" text-anchor="middle" font-weight="normal" stroke="#1a1a1a" stroke-width="0.05" >bser.:10°La</text>
<text transform="translate(0,178.20) scale(0.7124,1)" x="596.08" y="0" font-size="12.50" fill="#1a1a1a" text-anchor="middle" font-weight="normal" stroke="#1a1a1a" stroke-width="0.05" >m</text>
<text transform="translate(0,178.20) scale(0.8000,1)" x="538.80 547.06 554.97 563.27 571.45" y="0" font-size="12.50" fill="#1a1a1a" text-anchor="middle" font-weight="normal" stroke="#1a1a1a" stroke-width="0.05" >p:D65</text>
<text transform="translate(0,195.90) scale(0.7856,1)" x="461.05" y="0" font-size="16.43" fill="#d42836" text-anchor="middle" font-weight="normal" stroke="#d42836" stroke-width="0.35" >T</text>
<text transform="translate(0,195.90) scale(0.8000,1)" x="461.90 471.34 481.43 490.75" y="0" font-size="16.43" fill="#d42836" text-anchor="middle" font-weight="normal" stroke="#d42836" stroke-width="0.35" >arg.</text>
<text transform="translate(0,196.00) scale(0.7716,1)" x="558.07" y="0" font-size="16.43" fill="#2626c4" text-anchor="middle" font-weight="normal" stroke="#2626c4" stroke-width="0.35" >S</text>
<text transform="translate(0,196.00) scale(0.8000,1)" x="547.40" y="0" font-size="16.43" fill="#2626c4" text-anchor="middle" font-weight="normal" stroke="#2626c4" stroke-width="0.35" >a</text>
<text transform="translate(0,196.00) scale(0.6340,1)" x="703.15" y="0" font-size="16.43" fill="#2626c4" text-anchor="middle" font-weight="normal" stroke="#2626c4" stroke-width="0.35" >m</text>
<text transform="translate(0,196.00) scale(0.8000,1)" x="566.57 576.25" y="0" font-size="16.43" fill="#2626c4" text-anchor="middle" font-weight="normal" stroke="#2626c4" stroke-width="0.35" >p.</text>
<text transform="translate(0,216.40) scale(0.8000,1)" x="361.80" y="0" font-size="16.43" fill="#1a1a1a" text-anchor="middle" font-weight="normal" stroke="#1a1a1a" stroke-width="0.12" >E</text>
<text transform="translate(0,216.40) scale(0.6340,1)" x="468.92" y="0" font-size="16.43" fill="#1a1a1a" text-anchor="middle" font-weight="normal" stroke="#1a1a1a" stroke-width="0.12" >m</text>
<text transform="translate(0,216.40) scale(0.8000,1)" x="381.14 390.62 399.78 409.62" y="0" font-size="16.43" fill="#1a1a1a" text-anchor="middle" font-weight="normal" stroke="#1a1a1a" stroke-width="0.12" >ula.</text>
<rect x="421.20" y="201.40" width="51.20" height="16.50" fill="#f01e2e" />
<line x1="445.80" y1="230.70" x2="461.50" y2="230.70" stroke="#e04050" stroke-width="1.3" />
<text transform="translate(0,234.80) scale(0.7718,1)" x="601.55" y="0" font-size="12.21" fill="#d42836" text-anchor="middle" font-weight="normal" stroke="#d42836" stroke-width="0.12" >T</text>
<text transform="translate(0,234.80) scale(0.8000,1)" x="587.02 593.91 601.29 608.09" y="0" font-size="12.21" fill="#d42836" text-anchor="middle" font-weight="normal" stroke="#d42836" stroke-width="0.12" >arg.</text>
<line x1="445.80" y1="244.70" x2="461.50" y2="244.70" stroke="#3030b0" stroke-width="1.3" />
<text transform="translate(0,248.80) scale(0.7580,1)" x="612.50" y="0" font-size="12.21" fill="#2a2ac0" text-anchor="middle" font-weight="normal" stroke="#2a2ac0" stroke-width="0.12" >S</text>
<text transform="translate(0,248.80) scale(0.8000,1)" x="587.02" y="0" font-size="12.21" fill="#2a2ac0" text-anchor="middle" font-weight="normal" stroke="#2a2ac0" stroke-width="0.12" >a</text>
<text transform="translate(0,248.80) scale(0.6228,1)" x="763.28" y="0" font-size="12.21" fill="#2a2ac0" text-anchor="middle" font-weight="normal" stroke="#2a2ac0" stroke-width="0.12" >m</text>
<text transform="translate(0,248.80) scale(0.8000,1)" x="601.02 608.09" y="0" font-size="12.21" fill="#2a2ac0" text-anchor="middle" font-weight="normal" stroke="#2a2ac0" stroke-width="0.12" >p.</text>
<line x1="275.90" y1="250.10" x2="275.90" y2="390.30" stroke="#a0a0a0" stroke-width="1.4" />
<line x1="275.90" y1="390.30" x2="484.50" y2="390.30" stroke="#a0a0a0" stroke-width="1.4" />
<line x1="272.90" y1="390.30" x2="275.90" y2="390.30" stroke="#909090" stroke-width="1" />
<text transform="translate(0,393.20) scale(0.8000,1)" x="328.19 333.32 338.44" y="0" font-size="8.72" fill="#333" text-anchor="middle" font-weight="bold" stroke="#333" stroke-width="0.12" >0.0</text>
<line x1="272.90" y1="367.80" x2="275.90" y2="367.80" stroke="#909090" stroke-width="1" />
<text transform="translate(0,370.70) scale(0.8000,1)" x="328.19 333.32 338.46" y="0" font-size="8.72" fill="#333" text-anchor="middle" font-weight="bold" stroke="#333" stroke-width="0.12" >0.2</text>
<line x1="272.90" y1="345.30" x2="275.90" y2="345.30" stroke="#909090" stroke-width="1" />
<text transform="translate(0,348.20) scale(0.8000,1)" x="328.19 333.32 338.39" y="0" font-size="8.72" fill="#333" text-anchor="middle" font-weight="bold" stroke="#333" stroke-width="0.12" >0.4</text>
<line x1="272.90" y1="322.80" x2="275.90" y2="322.80" stroke="#909090" stroke-width="1" />
<text transform="translate(0,325.70) scale(0.8000,1)" x="328.19 333.32 338.44" y="0" font-size="8.72" fill="#333" text-anchor="middle" font-weight="bold" stroke="#333" stroke-width="0.12" >0.6</text>
<line x1="272.90" y1="300.30" x2="275.90" y2="300.30" stroke="#909090" stroke-width="1" />
<text transform="translate(0,303.20) scale(0.8000,1)" x="328.19 333.32 338.43" y="0" font-size="8.72" fill="#333" text-anchor="middle" font-weight="bold" stroke="#333" stroke-width="0.12" >0.8</text>
<line x1="272.90" y1="277.80" x2="275.90" y2="277.80" stroke="#909090" stroke-width="1" />
<text transform="translate(0,280.70) scale(0.8000,1)" x="328.03 333.32 338.44" y="0" font-size="8.72" fill="#333" text-anchor="middle" font-weight="bold" stroke="#333" stroke-width="0.12" >1.0</text>
<line x1="272.90" y1="255.30" x2="275.90" y2="255.30" stroke="#909090" stroke-width="1" />
<text transform="translate(0,258.20) scale(0.8000,1)" x="328.03 333.32 338.46" y="0" font-size="8.72" fill="#333" text-anchor="middle" font-weight="bold" stroke="#333" stroke-width="0.12" >1.2</text>
<line x1="276.25" y1="390.30" x2="276.25" y2="392.80" stroke="#909090" stroke-width="1" />
<text transform="translate(0,401.50) scale(0.8000,1)" x="340.14 345.32 350.44" y="0" font-size="8.72" fill="#333" text-anchor="middle" font-weight="bold" stroke="#333" stroke-width="0.12" >400</text>
<line x1="302.12" y1="390.30" x2="302.12" y2="392.80" stroke="#909090" stroke-width="1" />
<text transform="translate(0,401.50) scale(0.8000,1)" x="372.49 377.71 382.79" y="0" font-size="8.72" fill="#333" text-anchor="middle" font-weight="bold" stroke="#333" stroke-width="0.12" >437</text>
<line x1="328.00" y1="390.30" x2="328.00" y2="392.80" stroke="#909090" stroke-width="1" />
<text transform="translate(0,401.50) scale(0.8000,1)" x="404.83 410.00 415.11" y="0" font-size="8.72" fill="#333" text-anchor="middle" font-weight="bold" stroke="#333" stroke-width="0.12" >475</text>
<line x1="353.88" y1="390.30" x2="353.88" y2="392.80" stroke="#909090" stroke-width="1" />
<text transform="translate(0,401.50) scale(0.8000,1)" x="437.21 442.19 447.49" y="0" font-size="8.72" fill="#333" text-anchor="middle" font-weight="bold" stroke="#333" stroke-width="0.12" >512</text>
<line x1="379.75" y1="390.30" x2="379.75" y2="392.80" stroke="#909090" stroke-width="1" />
<text transform="translate(0,401.50) scale(0.8000,1)" x="469.55 474.67 479.82" y="0" font-size="8.72" fill="#333" text-anchor="middle" font-weight="bold" stroke="#333" stroke-width="0.12" >550</text>
<line x1="405.62" y1="390.30" x2="405.62" y2="392.80" stroke="#909090" stroke-width="1" />
<text transform="translate(0,401.50) scale(0.8000,1)" x="501.89 507.03 512.16" y="0" font-size="8.72" fill="#333" text-anchor="middle" font-weight="bold" stroke="#333" stroke-width="0.12" >587</text>
<line x1="431.50" y1="390.30" x2="431.50" y2="392.80" stroke="#909090" stroke-width="1" />
<text transform="translate(0,401.50) scale(0.8000,1)" x="534.25 539.40 544.49" y="0" font-size="8.72" fill="#333" text-anchor="middle" font-weight="bold" stroke="#333" stroke-width="0.12" >625</text>
<line x1="457.38" y1="390.30" x2="457.38" y2="392.80" stroke="#909090" stroke-width="1" />
<text transform="translate(0,401.50) scale(0.8000,1)" x="566.59 571.72 576.87" y="0" font-size="8.72" fill="#333" text-anchor="middle" font-weight="bold" stroke="#333" stroke-width="0.12" >662</text>
<line x1="483.25" y1="390.30" x2="483.25" y2="392.80" stroke="#909090" stroke-width="1" />
<text transform="translate(0,401.50) scale(0.8000,1)" x="598.94 604.07 609.19" y="0" font-size="8.72" fill="#333" text-anchor="middle" font-weight="bold" stroke="#333" stroke-width="0.12" >700</text>
<text transform="translate(0,401.50) scale(0.8000,1)" x="614.30" y="0" font-size="6.54" fill="#333" text-anchor="middle" font-weight="bold" stroke="#333" stroke-width="0.12" >n</text>
<text transform="translate(0,401.50) scale(0.6555,1)" x="754.91" y="0" font-size="6.54" fill="#333" text-anchor="middle" font-weight="bold" stroke="#333" stroke-width="0.12" >m</text>
<text transform="translate(0,230.40) scale(0.7200,1)" x="388.43 393.96 399.78 405.66 411.46" y="0" font-size="8.72" fill="#d03030" text-anchor="middle" font-weight="bold" stroke="#d03030" stroke-width="0.05" >Trans</text>
<text transform="translate(0,230.40) scale(0.5987,1)" x="501.69" y="0" font-size="8.72" fill="#d03030" text-anchor="middle" font-weight="bold" stroke="#d03030" stroke-width="0.05" >m</text>
<text transform="translate(0,230.40) scale(0.7200,1)" x="422.93 428.68 434.43 440.03 445.91 451.64 457.41 462.97" y="0" font-size="8.72" fill="#d03030" text-anchor="middle" font-weight="bold" stroke="#d03030" stroke-width="0.05" >ittance(</text>
<text transform="translate(0,230.40) scale(0.5439,1)" x="620.76" y="0" font-size="8.72" fill="#d03030" text-anchor="middle" font-weight="bold" stroke="#d03030" stroke-width="0.05" >%</text>
<text transform="translate(0,230.40) scale(0.7200,1)" x="474.89 480.43 486.03 491.94 497.69 503.43 509.19" y="0" font-size="8.72" fill="#d03030" text-anchor="middle" font-weight="bold" stroke="#d03030" stroke-width="0.05" >):100.0</text>
<text transform="translate(0,241.00) scale(0.7200,1)" x="388.43 393.96 399.78 405.66 411.46" y="0" font-size="8.72" fill="#3030b0" text-anchor="middle" font-weight="bold" stroke="#3030b0" stroke-width="0.05" >Trans</text>
<text transform="translate(0,241.00) scale(0.5987,1)" x="501.69" y="0" font-size="8.72" fill="#3030b0" text-anchor="middle" font-weight="bold" stroke="#3030b0" stroke-width="0.05" >m</text>
<text transform="translate(0,241.00) scale(0.7200,1)" x="422.93 428.68 434.43 440.03 445.91 451.64 457.41 462.97" y="0" font-size="8.72" fill="#3030b0" text-anchor="middle" font-weight="bold" stroke="#3030b0" stroke-width="0.05" >ittance(</text>
<text transform="translate(0,241.00) scale(0.5439,1)" x="620.76" y="0" font-size="8.72" fill="#3030b0" text-anchor="middle" font-weight="bold" stroke="#3030b0" stroke-width="0.05" >%</text>
<text transform="translate(0,241.00) scale(0.7200,1)" x="474.89 480.43 486.19 491.93 497.64" y="0" font-size="8.72" fill="#3030b0" text-anchor="middle" font-weight="bold" stroke="#3030b0" stroke-width="0.05" >):0.4</text>
<text transform="translate(0,252.20) scale(0.4838,1)" x="578.07" y="0" font-size="8.72" fill="#222" text-anchor="middle" font-weight="bold" stroke="#222" stroke-width="0.05" >W</text>
<text transform="translate(0,252.20) scale(0.7200,1)" x="394.03 399.93 405.66 411.43 417.16 422.91 428.79 434.43 440.15 445.72 451.66" y="0" font-size="8.72" fill="#222" text-anchor="middle" font-weight="bold" stroke="#222" stroke-width="0.05" >avelength(n</text>
<text transform="translate(0,252.20) scale(0.5987,1)" x="550.09" y="0" font-size="8.72" fill="#222" text-anchor="middle" font-weight="bold" stroke="#222" stroke-width="0.05" >m</text>
<text transform="translate(0,252.20) scale(0.7200,1)" x="463.39 468.93 474.67 480.42 486.19 491.93 497.69" y="0" font-size="8.72" fill="#222" text-anchor="middle" font-weight="bold" stroke="#222" stroke-width="0.05" >):550.0</text>
<line x1="276.00" y1="278.30" x2="483.00" y2="278.30" stroke="#e08474" stroke-width="1.05" />
<line x1="380.00" y1="255.90" x2="380.00" y2="390.30" stroke="#dcb080" stroke-width="1.1" />
<path d="M276.25,385.57 L276.60,385.90 L276.94,386.20 L277.29,386.49 L277.63,386.75 L277.98,386.99 L278.32,387.22 L278.67,387.43 L279.01,387.63 L279.36,387.82 L279.70,387.99 L280.05,388.15 L280.39,388.29 L280.74,388.43 L281.08,388.56 L281.43,388.68 L281.77,388.79 L282.12,388.90 L282.46,388.99 L282.81,389.08 L283.15,389.17 L283.50,389.25 L283.84,389.32 L284.19,389.39 L284.53,389.45 L284.88,389.51 L285.22,389.56 L285.56,389.61 L285.91,389.66 L286.25,389.70 L286.60,389.75 L286.94,389.78 L287.29,389.82 L287.63,389.85 L287.98,389.88 L288.32,389.91 L288.67,389.94 L289.01,389.96 L289.36,389.99 L289.70,390.01 L290.05,390.03 L290.39,390.05 L290.74,390.06 L291.08,390.08 L291.43,390.10 L291.77,390.11 L292.12,390.12 L292.46,390.14 L292.81,390.15 L293.15,390.16 L293.50,390.17 L293.85,390.18 L294.19,390.18 L294.54,390.19 L294.88,390.20 L295.23,390.21 L295.57,390.21 L295.92,390.22 L296.26,390.22 L296.61,390.23 L296.95,390.23 L297.30,390.24 L297.64,390.24 L297.99,390.25 L298.33,390.25 L298.68,390.25 L299.02,390.26 L299.37,390.26 L299.71,390.26 L300.06,390.27 L300.40,390.27 L300.75,390.27 L301.09,390.27 L301.44,390.27 L301.78,390.28 L302.12,390.28 L302.47,390.28 L302.81,390.28 L303.16,390.28 L303.50,390.28 L303.85,390.28 L304.19,390.29 L304.54,390.29 L304.88,390.29 L305.23,390.29 L305.57,390.29 L305.92,390.29 L306.26,390.29 L306.61,390.29 L306.95,390.29 L307.30,390.29 L307.64,390.29 L307.99,390.29 L308.33,390.29 L308.68,390.29 L309.02,390.29 L309.37,390.30 L309.71,390.30 L310.06,390.30 L310.40,390.30 L310.75,390.30 L311.10,390.30 L311.44,390.30 L311.78,390.30 L312.13,390.30 L312.48,390.30 L312.82,390.30 L313.17,390.30 L313.51,390.30 L313.86,390.30 L314.20,390.30 L314.55,390.30 L314.89,390.30 L315.24,390.30 L315.58,390.30 L315.93,390.30 L316.27,390.30 L316.62,390.30 L316.96,390.30 L317.31,390.30 L317.65,390.30 L318.00,390.30 L318.34,390.30 L318.69,390.30 L319.03,390.30 L319.38,390.30 L319.72,390.30 L320.06,390.30 L320.41,390.30 L320.75,390.30 L321.10,390.30 L321.44,390.30 L321.79,390.30 L322.13,390.30 L322.48,390.30 L322.82,390.30 L323.17,390.30 L323.51,390.30 L323.86,390.30 L324.20,390.30 L324.55,390.30 L324.89,390.30 L325.24,390.30 L325.58,390.30 L325.93,390.30 L326.27,390.30 L326.62,390.30 L326.96,390.30 L327.31,390.30 L327.65,390.30 L328.00,390.30 L328.35,390.30 L328.69,390.30 L329.04,390.30 L329.38,390.30 L329.73,390.30 L330.07,390.30 L330.42,390.30 L330.76,390.30 L331.11,390.30 L331.45,390.30 L331.80,390.30 L332.14,390.30 L332.49,390.30 L332.83,390.30 L333.18,390.30 L333.52,390.30 L333.87,390.30 L334.21,390.30 L334.56,390.30 L334.90,390.30 L335.25,390.30 L335.59,390.30 L335.94,390.30 L336.28,390.30 L336.62,390.30 L336.97,390.30 L337.31,390.30 L337.66,390.30 L338.00,390.30 L338.35,390.30 L338.69,390.30 L339.04,390.30 L339.38,390.30 L339.73,390.30 L340.07,390.30 L340.42,390.30 L340.76,390.30 L341.11,390.30 L341.45,390.30 L341.80,390.30 L342.14,390.30 L342.49,390.30 L342.83,390.30 L343.18,390.30 L343.52,390.30 L343.87,390.30 L344.21,390.30 L344.56,390.30 L344.90,390.30 L345.25,390.30 L345.60,390.30 L345.94,390.30 L346.28,390.30 L346.63,390.30 L346.98,390.30 L347.32,390.30 L347.66,390.30 L348.01,390.30 L348.36,390.30 L348.70,390.30 L349.05,390.30 L349.39,390.30 L349.74,390.30 L350.08,390.30 L350.43,390.30 L350.77,390.30 L351.12,390.30 L351.46,390.30 L351.81,390.30 L352.15,390.30 L352.50,390.30 L352.84,390.30 L353.19,390.30 L353.53,390.30 L353.88,390.30 L354.22,390.30 L354.56,390.30 L354.91,390.30 L355.25,390.30 L355.60,390.30 L355.94,390.30 L356.29,390.30 L356.63,390.30 L356.98,390.30 L357.32,390.30 L357.67,390.30 L358.01,390.30 L358.36,390.30 L358.70,390.30 L359.05,390.30 L359.39,390.30 L359.74,390.30 L360.09,390.30 L360.43,390.30 L360.77,390.30 L361.12,390.30 L361.47,390.30 L361.81,390.30 L362.15,390.30 L362.50,390.30 L362.85,390.30 L363.19,390.30 L363.54,390.30 L363.88,390.30 L364.23,390.30 L364.57,390.30 L364.92,390.30 L365.26,390.30 L365.61,390.30 L365.95,390.30 L366.30,390.30 L366.64,390.30 L366.99,390.30 L367.33,390.30 L367.68,390.30 L368.02,390.30 L368.37,390.30 L368.71,390.30 L369.06,390.30 L369.40,390.30 L369.75,390.30 L370.09,390.30 L370.44,390.30 L370.78,390.30 L371.12,390.30 L371.47,390.30 L371.81,390.30 L372.16,390.30 L372.50,390.30 L372.85,390.30 L373.19,390.30 L373.54,390.30 L373.88,390.30 L374.23,390.30 L374.57,390.30 L374.92,390.30 L375.26,390.30 L375.61,390.30 L375.95,390.30 L376.30,390.30 L376.64,390.30 L376.99,390.30 L377.34,390.30 L377.68,390.30 L378.02,390.30 L378.37,390.30 L378.72,390.30 L379.06,390.30 L379.40,390.30 L379.75,390.30 L380.10,390.30 L380.44,390.30 L380.78,390.30 L381.13,390.30 L381.48,390.30 L381.82,390.30 L382.17,390.30 L382.51,390.30 L382.86,390.30 L383.20,390.30 L383.55,390.30 L383.89,390.30 L384.24,390.30 L384.58,390.30 L384.93,390.26 L385.27,390.20 L385.62,390.10 L385.96,389.99 L386.31,389.86 L386.65,389.73 L387.00,389.59 L387.34,389.45 L387.69,389.32 L388.03,389.18 L388.38,389.04 L388.72,388.88 L389.06,388.72 L389.41,388.54 L389.75,388.36 L390.10,388.16 L390.44,387.95 L390.79,387.74 L391.13,387.51 L391.48,387.27 L391.82,387.01 L392.17,386.74 L392.51,386.46 L392.86,386.16 L393.20,385.84 L393.55,385.50 L393.89,385.14 L394.24,384.77 L394.58,384.37 L394.93,383.95 L395.27,383.50 L395.62,382.99 L395.97,382.42 L396.31,381.79 L396.65,381.10 L397.00,380.36 L397.35,379.56 L397.69,378.69 L398.04,377.66 L398.38,376.48 L398.73,375.21 L399.07,373.87 L399.41,372.53 L399.76,371.21 L400.11,369.86 L400.45,368.48 L400.80,367.06 L401.14,365.62 L401.49,364.17 L401.83,362.71 L402.17,361.21 L402.52,359.67 L402.87,358.13 L403.21,356.61 L403.56,355.14 L403.90,353.77 L404.25,352.54 L404.59,351.37 L404.94,350.12 L405.28,348.67 L405.62,346.89 L405.97,344.78 L406.31,342.46 L406.66,340.04 L407.00,337.63 L407.35,335.33 L407.69,333.23 L408.04,331.18 L408.38,329.16 L408.73,327.17 L409.08,325.24 L409.42,323.39 L409.76,321.63 L410.11,319.99 L410.45,318.46 L410.80,317.02 L411.14,315.65 L411.49,314.34 L411.84,313.06 L412.18,311.80 L412.52,310.54 L412.87,309.28 L413.22,308.03 L413.56,306.80 L413.90,305.60 L414.25,304.45 L414.60,303.36 L414.94,302.35 L415.28,301.42 L415.63,300.56 L415.98,299.72 L416.32,298.92 L416.66,298.14 L417.01,297.39 L417.36,296.68 L417.70,296.01 L418.05,295.39 L418.39,294.80 L418.74,294.26 L419.08,293.77 L419.42,293.32 L419.77,292.88 L420.12,292.46 L420.46,292.05 L420.81,291.66 L421.15,291.29 L421.50,290.93 L421.84,290.59 L422.19,290.27 L422.53,289.97 L422.88,289.69 L423.22,289.42 L423.56,289.18 L423.91,288.95 L424.25,288.74 L424.60,288.54 L424.95,288.33 L425.29,288.13 L425.63,287.93 L425.98,287.73 L426.32,287.53 L426.67,287.34 L427.01,287.15 L427.36,286.97 L427.71,286.79 L428.05,286.62 L428.39,286.46 L428.74,286.30 L429.08,286.16 L429.43,286.02 L429.77,285.89 L430.12,285.78 L430.47,285.68 L430.81,285.58 L431.15,285.51 L431.50,285.44 L431.85,285.39 L432.19,285.36 L432.53,285.34 L432.88,285.34 L433.23,285.34 L433.57,285.34 L433.92,285.35 L434.26,285.35 L434.61,285.36 L434.95,285.36 L435.29,285.37 L435.64,285.38 L435.99,285.39 L436.33,285.40 L436.68,285.42 L437.02,285.43 L437.37,285.44 L437.71,285.46 L438.05,285.47 L438.40,285.48 L438.75,285.50 L439.09,285.51 L439.44,285.53 L439.78,285.55 L440.12,285.56 L440.47,285.58 L440.81,285.59 L441.16,285.61 L441.50,285.62 L441.85,285.64 L442.19,285.66 L442.54,285.67 L442.88,285.68 L443.23,285.70 L443.58,285.71 L443.92,285.72 L444.26,285.73 L444.61,285.74 L444.95,285.75 L445.30,285.76 L445.64,285.77 L445.99,285.78 L446.34,285.78 L446.68,285.79 L447.02,285.79 L447.37,285.80 L447.72,285.80 L448.06,285.80 L448.40,285.81 L448.75,285.81 L449.10,285.81 L449.44,285.82 L449.78,285.82 L450.13,285.82 L450.48,285.82 L450.82,285.83 L451.16,285.83 L451.51,285.83 L451.86,285.83 L452.20,285.83 L452.55,285.84 L452.89,285.84 L453.24,285.84 L453.58,285.84 L453.92,285.84 L454.27,285.84 L454.62,285.85 L454.96,285.85 L455.31,285.85 L455.65,285.85 L456.00,285.86 L456.34,285.86 L456.69,285.86 L457.03,285.86 L457.38,285.87 L457.72,285.87 L458.06,285.87 L458.41,285.88 L458.75,285.88 L459.10,285.88 L459.44,285.89 L459.79,285.89 L460.13,285.90 L460.48,285.90 L460.83,285.91 L461.17,285.92 L461.51,285.93 L461.86,285.95 L462.20,285.96 L462.55,285.98 L462.89,286.00 L463.24,286.02 L463.59,286.05 L463.93,286.08 L464.27,286.10 L464.62,286.13 L464.97,286.16 L465.31,286.20 L465.65,286.23 L466.00,286.26 L466.35,286.30 L466.69,286.34 L467.03,286.38 L467.38,286.42 L467.73,286.46 L468.07,286.50 L468.41,286.54 L468.76,286.58 L469.11,286.62 L469.45,286.67 L469.80,286.71 L470.14,286.75 L470.49,286.80 L470.83,286.84 L471.17,286.88 L471.52,286.93 L471.87,286.97 L472.21,287.01 L472.56,287.06 L472.90,287.10 L473.25,287.14 L473.59,287.18 L473.94,287.23 L474.28,287.27 L474.62,287.31 L474.97,287.35 L475.31,287.39 L475.66,287.44 L476.00,287.48 L476.35,287.53 L476.70,287.57 L477.04,287.62 L477.38,287.67 L477.73,287.72 L478.07,287.77 L478.42,287.82 L478.76,287.87 L479.11,287.92 L479.46,287.97 L479.80,288.02 L480.14,288.07 L480.49,288.12 L480.83,288.18 L481.18,288.23 L481.52,288.28 L481.87,288.33 L482.22,288.38 L482.56,288.43 L482.90,288.48 L483.25,288.53" fill="none" stroke="#5a5ac6" stroke-width="1.0"/>
<line x1="276.50" y1="389.80" x2="302.50" y2="389.80" stroke="#303090" stroke-width="1.0" />
<line x1="487.50" y1="255.90" x2="487.50" y2="390.30" stroke="#b8b8b8" stroke-width="1.5" />
<line x1="487.50" y1="302.70" x2="487.50" y2="390.30" stroke="#d04050" stroke-width="1.5" />
<line x1="487.50" y1="385.50" x2="487.50" y2="390.30" stroke="#60d060" stroke-width="1.5" />
<rect x="276.20" y="404.20" width="207.20" height="8.80" fill="url(#spec)" />
<rect x="255.50" y="417.70" width="248.20" height="23.40" fill="#38a6f4" />
<text transform="translate(0,431.30) scale(0.7808,1)" x="337.19" y="0" font-size="13.37" fill="#e6f4ff" text-anchor="middle" font-weight="normal" stroke="#e6f4ff" stroke-width="0.12" >T</text>
<text transform="translate(0,431.30) scale(0.8000,1)" x="336.79 344.52 352.10" y="0" font-size="13.37" fill="#e6f4ff" text-anchor="middle" font-weight="normal" stroke="#e6f4ff" stroke-width="0.12" >est</text>
<text transform="translate(0,431.30) scale(0.7669,1)" x="383.40" y="0" font-size="13.37" fill="#e6f4ff" text-anchor="middle" font-weight="normal" stroke="#e6f4ff" stroke-width="0.12" >S</text>
<text transform="translate(0,431.30) scale(0.8000,1)" x="375.17 382.91 390.44 398.28" y="0" font-size="13.37" fill="#e6f4ff" text-anchor="middle" font-weight="normal" stroke="#e6f4ff" stroke-width="0.12" >top!</text>
<rect x="407.70" y="420.00" width="56.10" height="13.30" fill="#ffffff" stroke="#1f63c6" stroke-width="1"/>
<text transform="translate(0,431.10) scale(0.7681,1)" x="536.42" y="0" font-size="13.37" fill="#111" text-anchor="middle" font-weight="normal" stroke="#111" stroke-width="0.12" >T</text>
<text transform="translate(0,431.10) scale(0.8000,1)" x="522.59 530.20 537.76 545.28 552.84" y="0" font-size="13.37" fill="#111" text-anchor="middle" font-weight="normal" stroke="#111" stroke-width="0.12" >:43.0</text>
<text transform="translate(0,431.10) scale(0.6199,1)" x="723.22" y="0" font-size="13.37" fill="#111" text-anchor="middle" font-weight="normal" stroke="#111" stroke-width="0.12" >m</text>
<text transform="translate(0,431.10) scale(0.8000,1)" x="568.02" y="0" font-size="13.37" fill="#111" text-anchor="middle" font-weight="normal" stroke="#111" stroke-width="0.12" >s</text>
<rect x="467.60" y="420.00" width="25.30" height="13.30" fill="#ffffff" stroke="#1f63c6" stroke-width="1"/>
<text transform="translate(0,431.10) scale(0.8000,1)" x="588.67 596.50 603.89 611.04" y="0" font-size="13.37" fill="#d42836" text-anchor="middle" font-weight="normal" stroke="#d42836" stroke-width="0.12" >Lock</text>
<rect x="255.50" y="439.80" width="248.20" height="1.30" fill="#3a7cba" />
<rect x="258.90" y="434.70" width="239.80" height="3.30" fill="#ffffff" />
<rect x="255.50" y="441.10" width="248.20" height="31.50" fill="url(#tb)" />
<path d="M274.92,448.90 L285.92,454.50 L274.92,460.10 z" fill="#7ee21c"/>
<path d="M323.16,448.90 L332.56,454.50 L323.16,460.10 z" fill="#7ee21c"/>
<rect x="332.56" y="448.90" width="3.80" height="11.20" fill="#7ee21c" />
<rect x="374.40" y="449.00" width="10.40" height="11.00" fill="#c4c4c4" />
<rect x="423.54" y="448.10" width="11.4" height="12.0" rx="1.6" fill="#7ee21c"/>
<path d="M425.64,448.50 V451.90 H432.84 V448.50" fill="none" stroke="#1c2a10" stroke-width="1.1"/>
<rect x="427.64" y="448.90" width="3.00" height="2.00" fill="#a8f060" />
<path d="M425.24,459.90 V454.30 H433.24 V459.90" fill="none" stroke="#1c2a10" stroke-width="1.1"/>
<path d="M471.88,460.30 L471.88,450.70 L475.88,450.70 L477.28,452.30 L483.68,452.30 L483.68,454.70" fill="none" stroke="#5aa818" stroke-width="1.3"/>
<path d="M471.48,460.70 L474.88,454.90 L486.88,454.90 L483.48,460.70 z" fill="#7ee21c"/>
<circle cx="484.48" cy="449.10" r="1.1" fill="#5aa818"/>
<path d="M480.48,450.30 Q482.48,447.90 483.88,448.70" fill="none" stroke="#5aa818" stroke-width="1"/>
<text transform="translate(0,471.60) scale(0.6618,1)" x="412.03" y="0" font-size="8.43" fill="#6cc81e" text-anchor="middle" font-weight="bold" stroke="#6cc81e" stroke-width="0.12" >C</text>
<text transform="translate(0,471.60) scale(0.8000,1)" x="345.50 350.40 355.15 359.90" y="0" font-size="8.43" fill="#6cc81e" text-anchor="middle" font-weight="bold" stroke="#6cc81e" stroke-width="0.12" >ali.</text>
<text transform="translate(0,471.60) scale(0.6189,1)" x="520.86" y="0" font-size="8.43" fill="#6cc81e" text-anchor="middle" font-weight="bold" stroke="#6cc81e" stroke-width="0.12" >M</text>
<text transform="translate(0,471.60) scale(0.8000,1)" x="407.68 412.30 417.22 421.95" y="0" font-size="8.43" fill="#6cc81e" text-anchor="middle" font-weight="bold" stroke="#6cc81e" stroke-width="0.12" >eas.</text>
<text transform="translate(0,471.60) scale(0.7223,1)" x="517.70" y="0" font-size="8.43" fill="#7c7c7c" text-anchor="middle" font-weight="bold" stroke="#7c7c7c" stroke-width="0.12" >S</text>
<text transform="translate(0,471.60) scale(0.8000,1)" x="472.12 476.88 481.52" y="0" font-size="8.43" fill="#7c7c7c" text-anchor="middle" font-weight="bold" stroke="#7c7c7c" stroke-width="0.12" >top</text>
<text transform="translate(0,471.60) scale(0.7223,1)" x="586.42" y="0" font-size="8.43" fill="#6cc81e" text-anchor="middle" font-weight="bold" stroke="#6cc81e" stroke-width="0.12" >S</text>
<text transform="translate(0,471.60) scale(0.8000,1)" x="534.02" y="0" font-size="8.43" fill="#6cc81e" text-anchor="middle" font-weight="bold" stroke="#6cc81e" stroke-width="0.12" >a</text>
<text transform="translate(0,471.60) scale(0.7899,1)" x="545.82" y="0" font-size="8.43" fill="#6cc81e" text-anchor="middle" font-weight="bold" stroke="#6cc81e" stroke-width="0.12" >v</text>
<text transform="translate(0,471.60) scale(0.8000,1)" x="543.65" y="0" font-size="8.43" fill="#6cc81e" text-anchor="middle" font-weight="bold" stroke="#6cc81e" stroke-width="0.12" >e</text>
<text transform="translate(0,471.60) scale(0.6228,1)" x="759.77" y="0" font-size="8.43" fill="#6cc81e" text-anchor="middle" font-weight="bold" stroke="#6cc81e" stroke-width="0.12" >O</text>
<text transform="translate(0,471.60) scale(0.8000,1)" x="596.12 600.95 605.71" y="0" font-size="8.43" fill="#6cc81e" text-anchor="middle" font-weight="bold" stroke="#6cc81e" stroke-width="0.12" >pen</text>
<text transform="translate(0,27.00) scale(0.6560,1)" x="779.27" y="0" font-size="17.15" fill="#f0f0f0" text-anchor="middle" font-weight="normal" >O</text>
<text transform="translate(0,27.00) scale(0.7000,1)" x="741.71 753.15 764.32" y="0" font-size="17.15" fill="#f0f0f0" text-anchor="middle" font-weight="normal" >HSP</text>
<text transform="translate(0,27.00) scale(1.4902,1)" x="364.51" y="0" font-size="17.15" fill="#f0f0f0" text-anchor="middle" font-weight="normal" >-</text>
<text transform="translate(0,27.00) scale(0.7000,1)" x="787.37 798.87 810.29 821.72" y="0" font-size="17.15" fill="#f0f0f0" text-anchor="middle" font-weight="normal" >650T</text>
<rect x="671.00" y="14.60" width="10.9" height="13.6" rx="1.2" fill="#ffffff"/>
<rect x="672.60" y="16.20" width="7.70" height="5.00" fill="#141414" />
<rect x="673.30" y="16.60" width="1.30" height="4.20" fill="#8a8a8a" />
<rect x="675.80" y="16.60" width="1.30" height="4.20" fill="#8a8a8a" />
<rect x="678.30" y="16.60" width="1.30" height="4.20" fill="#8a8a8a" />
<rect x="673.00" y="24.30" width="6.8" height="1.9" rx="0.9" fill="#141414"/>
<rect x="687.25" y="16.15" width="13.8" height="9.2" rx="2" fill="#141414" stroke="#fff" stroke-width="1.5"/>
<rect x="689.20" y="17.60" width="8.60" height="6.40" fill="#f4f4f4" />
<rect x="701.70" y="18.60" width="1.20" height="4.40" fill="#fff" />
<text transform="translate(0,27.00) scale(0.7400,1)" x="958.48 969.66 980.57 991.56 1002.44" y="0" font-size="16.57" fill="#f0f0f0" text-anchor="middle" font-weight="normal" >15:32</text>
<rect x="503.10" y="30.00" width="1.20" height="23.00" fill="#5cb4f0" />
<text transform="translate(0,48.60) scale(0.7800,1)" x="663.66 673.72 683.56 694.03 704.17" y="0" font-size="16.43" fill="#d6f3ff" text-anchor="middle" font-weight="normal" stroke="#d6f3ff" stroke-width="0.2" >Stan.</text>
<text transform="translate(0,48.60) scale(0.7796,1)" x="747.09" y="0" font-size="16.43" fill="#d6f3ff" text-anchor="middle" font-weight="normal" stroke="#d6f3ff" stroke-width="0.2" >D</text>
<text transform="translate(0,48.60) scale(0.7800,1)" x="756.77 767.18 777.02" y="0" font-size="16.43" fill="#d6f3ff" text-anchor="middle" font-weight="normal" stroke="#d6f3ff" stroke-width="0.2" >ata</text>
<text transform="translate(0,48.60) scale(0.7291,1)" x="876.80" y="0" font-size="16.43" fill="#c8283e" text-anchor="middle" font-weight="normal" stroke="#c8283e" stroke-width="0.3" >C</text>
<text transform="translate(0,48.60) scale(0.7800,1)" x="829.77 839.53 850.06 860.19" y="0" font-size="16.43" fill="#c8283e" text-anchor="middle" font-weight="normal" stroke="#c8283e" stroke-width="0.3" >hro.</text>
<text transform="translate(0,48.60) scale(0.7800,1)" x="904.04 914.18 924.23 934.42" y="0" font-size="16.43" fill="#d6f3ff" text-anchor="middle" font-weight="normal" stroke="#d6f3ff" stroke-width="0.2" >Set.</text>
<rect x="503.70" y="53.40" width="244.10" height="1.20" fill="#3c84c4" />
<rect x="625.60" y="52.10" width="60.90" height="2.50" fill="#a8304e" />
<rect x="504.4" y="58.1" width="242.9" height="356.4" fill="none" stroke="#8a8a8a" stroke-width="1.3"/>
<line x1="504.40" y1="82.40" x2="747.30" y2="82.40" stroke="#6c6c6c" stroke-width="1.3" />
<line x1="504.40" y1="107.20" x2="747.30" y2="107.20" stroke="#6c6c6c" stroke-width="1.3" />
<line x1="504.40" y1="131.40" x2="747.30" y2="131.40" stroke="#6c6c6c" stroke-width="1.3" />
<line x1="504.40" y1="173.00" x2="747.30" y2="173.00" stroke="#6c6c6c" stroke-width="1.3" />
<line x1="504.40" y1="196.60" x2="747.30" y2="196.60" stroke="#6c6c6c" stroke-width="1.3" />
<line x1="538.50" y1="58.10" x2="538.50" y2="196.60" stroke="#6c6c6c" stroke-width="1.3" />
<line x1="591.30" y1="58.10" x2="591.30" y2="196.60" stroke="#6c6c6c" stroke-width="1.3" />
<line x1="643.40" y1="58.10" x2="643.40" y2="196.60" stroke="#6c6c6c" stroke-width="1.3" />
<line x1="695.40" y1="58.10" x2="695.40" y2="196.60" stroke="#6c6c6c" stroke-width="1.3" />
<text transform="translate(0,75.80) scale(0.8600,1)" x="651.84" y="0" font-size="16.28" fill="#1a1a1a" text-anchor="middle" font-weight="normal" stroke="#1a1a1a" stroke-width="0.28" >L</text>
<text transform="translate(0,80.28) scale(0.8600,1)" x="661.48" y="0" font-size="22.79" fill="#1a1a1a" text-anchor="middle" font-weight="normal" stroke="#1a1a1a" stroke-width="0.28" >*</text>
<text transform="translate(0,75.80) scale(0.8600,1)" x="712.88" y="0" font-size="16.28" fill="#1a1a1a" text-anchor="middle" font-weight="normal" stroke="#1a1a1a" stroke-width="0.28" >a</text>
<text transform="translate(0,80.28) scale(0.8600,1)" x="722.47" y="0" font-size="22.79" fill="#1a1a1a" text-anchor="middle" font-weight="normal" stroke="#1a1a1a" stroke-width="0.28" >*</text>
<text transform="translate(0,75.80) scale(0.8600,1)" x="773.57" y="0" font-size="16.28" fill="#1a1a1a" text-anchor="middle" font-weight="normal" stroke="#1a1a1a" stroke-width="0.28" >b</text>
<text transform="translate(0,80.28) scale(0.8600,1)" x="782.99" y="0" font-size="22.79" fill="#1a1a1a" text-anchor="middle" font-weight="normal" stroke="#1a1a1a" stroke-width="0.28" >*</text>
<text transform="translate(0,75.80) scale(0.7943,1)" x="881.78" y="0" font-size="16.28" fill="#1a1a1a" text-anchor="middle" font-weight="normal" stroke="#1a1a1a" stroke-width="0.28" >E</text>
<text transform="translate(0,75.80) scale(0.6144,1)" x="1152.26" y="0" font-size="16.28" fill="#1a1a1a" text-anchor="middle" font-weight="normal" stroke="#1a1a1a" stroke-width="0.28" >m</text>
<text transform="translate(0,75.80) scale(0.8000,1)" x="894.07 903.18 911.97 921.44" y="0" font-size="16.28" fill="#1a1a1a" text-anchor="middle" font-weight="normal" stroke="#1a1a1a" stroke-width="0.28" >ula.</text>
<text transform="translate(0,99.90) scale(0.7196,1)" x="707.41" y="0" font-size="16.28" fill="#1a1a1a" text-anchor="middle" font-weight="normal" stroke="#1a1a1a" stroke-width="0.28" >T</text>
<text transform="translate(0,99.90) scale(0.7800,1)" x="661.13 669.92 679.35 688.01" y="0" font-size="16.28" fill="#1a1a1a" text-anchor="middle" font-weight="normal" stroke="#1a1a1a" stroke-width="0.28" >arg.</text>
<text transform="translate(0,100.30) scale(0.8600,1)" x="638.15 647.62 656.86 666.10 675.35" y="0" font-size="16.28" fill="#d02a30" text-anchor="middle" font-weight="normal" stroke="#d02a30" stroke-width="0.28" >100.0</text>
<text transform="translate(0,100.30) scale(0.8600,1)" x="703.98 713.23 722.47 731.72" y="0" font-size="16.28" fill="#d02a30" text-anchor="middle" font-weight="normal" stroke="#d02a30" stroke-width="0.28" >0.00</text>
<text transform="translate(0,100.30) scale(0.8600,1)" x="764.51 773.75 782.99 792.24" y="0" font-size="16.28" fill="#d02a30" text-anchor="middle" font-weight="normal" stroke="#d02a30" stroke-width="0.28" >0.00</text>
<text transform="translate(0,124.60) scale(0.7068,1)" x="720.22" y="0" font-size="16.28" fill="#1a1a1a" text-anchor="middle" font-weight="normal" stroke="#1a1a1a" stroke-width="0.28" >S</text>
<text transform="translate(0,124.60) scale(0.7800,1)" x="661.13" y="0" font-size="16.28" fill="#1a1a1a" text-anchor="middle" font-weight="normal" stroke="#1a1a1a" stroke-width="0.28" >a</text>
<text transform="translate(0,124.60) scale(0.5807,1)" x="900.37" y="0" font-size="16.28" fill="#1a1a1a" text-anchor="middle" font-weight="normal" stroke="#1a1a1a" stroke-width="0.28" >m</text>
<text transform="translate(0,124.60) scale(0.7800,1)" x="678.98 688.01" y="0" font-size="16.28" fill="#1a1a1a" text-anchor="middle" font-weight="normal" stroke="#1a1a1a" stroke-width="0.28" >p.</text>
<text transform="translate(0,124.60) scale(0.8600,1)" x="638.39 647.62 656.86 666.16 675.35" y="0" font-size="16.28" fill="#2626c4" text-anchor="middle" font-weight="normal" stroke="#2626c4" stroke-width="0.28" >52.40</text>
<text transform="translate(0,124.60) scale(0.8600,1)" x="699.35 708.65 717.85 727.09 736.34" y="0" font-size="16.28" fill="#2626c4" text-anchor="middle" font-weight="normal" stroke="#2626c4" stroke-width="0.28" >73.20</text>
<text transform="translate(0,124.60) scale(0.8600,1)" x="759.88 769.13 778.37 787.62 796.86" y="0" font-size="16.28" fill="#2626c4" text-anchor="middle" font-weight="normal" stroke="#2626c4" stroke-width="0.28" >82.90</text>
<rect x="703.30" y="109.80" width="40.50" height="18.20" fill="#f01e2e" />
<text transform="translate(0,157.10) scale(0.7449,1)" x="684.02" y="0" font-size="16.28" fill="#1a1a1a" text-anchor="middle" font-weight="normal" stroke="#1a1a1a" stroke-width="0.28" >C</text>
<text transform="translate(0,157.10) scale(0.8000,1)" x="646.96 656.59 667.00" y="0" font-size="16.28" fill="#1a1a1a" text-anchor="middle" font-weight="normal" stroke="#1a1a1a" stroke-width="0.28" >hro</text>
<text transform="translate(0,148.40) scale(0.8600,1)" x="643.00 661.09" y="0" font-size="16.28" fill="#1a1a1a" text-anchor="middle" font-weight="normal" stroke="#1a1a1a" stroke-width="0.28" >ΔL</text>
<text transform="translate(0,152.88) scale(0.8600,1)" x="670.72" y="0" font-size="22.79" fill="#1a1a1a" text-anchor="middle" font-weight="normal" stroke="#1a1a1a" stroke-width="0.28" >*</text>
<text transform="translate(0,148.40) scale(0.8600,1)" x="703.99 722.13" y="0" font-size="16.28" fill="#1a1a1a" text-anchor="middle" font-weight="normal" stroke="#1a1a1a" stroke-width="0.28" >Δa</text>
<text transform="translate(0,152.88) scale(0.8600,1)" x="731.71" y="0" font-size="22.79" fill="#1a1a1a" text-anchor="middle" font-weight="normal" stroke="#1a1a1a" stroke-width="0.28" >*</text>
<text transform="translate(0,148.40) scale(0.8600,1)" x="764.51 782.81" y="0" font-size="16.28" fill="#1a1a1a" text-anchor="middle" font-weight="normal" stroke="#1a1a1a" stroke-width="0.28" >Δb</text>
<text transform="translate(0,152.88) scale(0.8600,1)" x="792.23" y="0" font-size="22.79" fill="#1a1a1a" text-anchor="middle" font-weight="normal" stroke="#1a1a1a" stroke-width="0.28" >*</text>
<text transform="translate(0,148.40) scale(0.8600,1)" x="814.34" y="0" font-size="16.28" fill="#1a1a1a" text-anchor="middle" font-weight="normal" stroke="#1a1a1a" stroke-width="0.28" >Δ</text>
<text transform="translate(0,148.40) scale(0.8541,1)" x="838.02" y="0" font-size="16.28" fill="#1a1a1a" text-anchor="middle" font-weight="normal" stroke="#1a1a1a" stroke-width="0.28" >E</text>
<text transform="translate(0,152.88) scale(0.8600,1)" x="841.71" y="0" font-size="22.79" fill="#1a1a1a" text-anchor="middle" font-weight="normal" stroke="#1a1a1a" stroke-width="0.28" >*</text>
<text transform="translate(0,148.40) scale(0.8600,1)" x="850.50 859.79" y="0" font-size="16.28" fill="#1a1a1a" text-anchor="middle" font-weight="normal" stroke="#1a1a1a" stroke-width="0.28" >ab</text>
<text transform="translate(0,165.70) scale(1.5602,1)" x="349.33" y="0" font-size="16.28" fill="#1a1a1a" text-anchor="middle" font-weight="normal" stroke="#1a1a1a" stroke-width="0.28" >-</text>
<text transform="translate(0,165.70) scale(0.8600,1)" x="643.05 652.23 661.48 670.67 679.97" y="0" font-size="16.28" fill="#1a1a1a" text-anchor="middle" font-weight="normal" stroke="#1a1a1a" stroke-width="0.28" >47.60</text>
<text transform="translate(0,165.70) scale(0.8600,1)" x="699.35 708.65 717.85 727.09 736.34" y="0" font-size="16.28" fill="#1a1a1a" text-anchor="middle" font-weight="normal" stroke="#1a1a1a" stroke-width="0.28" >73.20</text>
<text transform="translate(0,165.70) scale(0.8600,1)" x="759.88 769.13 778.37 787.62 796.86" y="0" font-size="16.28" fill="#1a1a1a" text-anchor="middle" font-weight="normal" stroke="#1a1a1a" stroke-width="0.28" >82.90</text>
<text transform="translate(0,165.70) scale(0.8600,1)" x="820.07 829.53 838.78 848.02 857.32" y="0" font-size="16.28" fill="#1a1a1a" text-anchor="middle" font-weight="normal" stroke="#1a1a1a" stroke-width="0.28" >120.4</text>
<text transform="translate(0,190.30) scale(0.8000,1)" x="637.48 647.01 657.18 667.18" y="0" font-size="16.28" fill="#1a1a1a" text-anchor="middle" font-weight="normal" stroke="#1a1a1a" stroke-width="0.28" >Judg</text>
<text transform="translate(0,190.30) scale(0.7915,1)" x="698.36" y="0" font-size="16.28" fill="#d02a30" text-anchor="middle" font-weight="normal" stroke="#d02a30" stroke-width="0.28" >D</text>
<text transform="translate(0,190.30) scale(0.8600,1)" x="651.89 661.08 670.17" y="0" font-size="16.28" fill="#d02a30" text-anchor="middle" font-weight="normal" stroke="#d02a30" stroke-width="0.28" >ark</text>
<text transform="translate(0,190.30) scale(0.7896,1)" x="771.49" y="0" font-size="16.28" fill="#d02a30" text-anchor="middle" font-weight="normal" stroke="#d02a30" stroke-width="0.28" >R</text>
<text transform="translate(0,190.30) scale(0.8600,1)" x="717.86 727.28" y="0" font-size="16.28" fill="#d02a30" text-anchor="middle" font-weight="normal" stroke="#d02a30" stroke-width="0.28" >ed</text>
<text transform="translate(0,190.30) scale(0.7525,1)" x="863.16" y="0" font-size="16.28" fill="#d02a30" text-anchor="middle" font-weight="normal" stroke="#d02a30" stroke-width="0.28" >Y</text>
<text transform="translate(0,190.30) scale(0.8600,1)" x="764.52 773.75 782.99 792.24" y="0" font-size="16.28" fill="#d02a30" text-anchor="middle" font-weight="normal" stroke="#d02a30" stroke-width="0.28" >ello</text>
<text transform="translate(0,190.30) scale(0.6457,1)" x="1067.48" y="0" font-size="16.28" fill="#d02a30" text-anchor="middle" font-weight="normal" stroke="#d02a30" stroke-width="0.28" >w</text>
<text transform="translate(0,190.30) scale(0.8600,1)" x="824.57 833.81 843.41 852.64" y="0" font-size="16.28" fill="#d02a30" text-anchor="middle" font-weight="normal" stroke="#d02a30" stroke-width="0.28" >Fail</text>
<ellipse cx="640.00" cy="299.50" rx="84.00" ry="89.00" fill="#8a9a70"/>
<foreignObject x="554.50" y="209.00" width="171.00" height="181.00"><div style="width:100%;height:100%;border-radius:50%;background:radial-gradient(closest-side, rgba(200,200,200,0.92) 0%, rgba(200,200,202,0.64) 25%, rgba(200,200,202,0.34) 50%, rgba(200,200,202,0.1) 75%, rgba(200,200,202,0) 90%, rgba(0,0,0,0.07) 100%), conic-gradient(#c4c000 0deg, #ccaa00 22deg, #d48a00 45deg, #dc5200 67deg, #dc0a0a 90deg, #a80840 112deg, #7a1080 135deg, #4a18b0 157deg, #2018d0 180deg, #0a3aa0 202deg, #0a6a5a 225deg, #0a9a30 247deg, #18c000 270deg, #3cb800 292deg, #60b800 315deg, #a0bc00 337deg, #c4c000 360deg);"></div></foreignObject>
<rect x="554.5" y="209.0" width="171.0" height="181.0" fill="none" stroke="#9a9a9a" stroke-width="1.3"/>
<line x1="575.88" y1="209.00" x2="575.88" y2="390.00" stroke="#1a1a1a" stroke-width="1" stroke-dasharray="1.2,1.3" opacity="0.65"/>
<line x1="554.50" y1="231.62" x2="725.50" y2="231.62" stroke="#1a1a1a" stroke-width="1" stroke-dasharray="1.2,1.3" opacity="0.65"/>
<line x1="597.25" y1="209.00" x2="597.25" y2="390.00" stroke="#1a1a1a" stroke-width="1" stroke-dasharray="1.2,1.3" opacity="0.65"/>
<line x1="554.50" y1="254.25" x2="725.50" y2="254.25" stroke="#1a1a1a" stroke-width="1" stroke-dasharray="1.2,1.3" opacity="0.65"/>
<line x1="618.62" y1="209.00" x2="618.62" y2="390.00" stroke="#1a1a1a" stroke-width="1" stroke-dasharray="1.2,1.3" opacity="0.65"/>
<line x1="554.50" y1="276.88" x2="725.50" y2="276.88" stroke="#1a1a1a" stroke-width="1" stroke-dasharray="1.2,1.3" opacity="0.65"/>
<line x1="640.00" y1="209.00" x2="640.00" y2="390.00" stroke="#1a1a1a" stroke-width="1" stroke-dasharray="1.2,1.3" opacity="0.65"/>
<line x1="554.50" y1="299.50" x2="725.50" y2="299.50" stroke="#1a1a1a" stroke-width="1" stroke-dasharray="1.2,1.3" opacity="0.65"/>
<line x1="661.38" y1="209.00" x2="661.38" y2="390.00" stroke="#1a1a1a" stroke-width="1" stroke-dasharray="1.2,1.3" opacity="0.65"/>
<line x1="554.50" y1="322.12" x2="725.50" y2="322.12" stroke="#1a1a1a" stroke-width="1" stroke-dasharray="1.2,1.3" opacity="0.65"/>
<line x1="682.75" y1="209.00" x2="682.75" y2="390.00" stroke="#1a1a1a" stroke-width="1" stroke-dasharray="1.2,1.3" opacity="0.65"/>
<line x1="554.50" y1="344.75" x2="725.50" y2="344.75" stroke="#1a1a1a" stroke-width="1" stroke-dasharray="1.2,1.3" opacity="0.65"/>
<line x1="704.12" y1="209.00" x2="704.12" y2="390.00" stroke="#1a1a1a" stroke-width="1" stroke-dasharray="1.2,1.3" opacity="0.65"/>
<line x1="554.50" y1="367.38" x2="725.50" y2="367.38" stroke="#1a1a1a" stroke-width="1" stroke-dasharray="1.2,1.3" opacity="0.65"/>
<rect x="523.2" y="209.2" width="10.4" height="180.8" fill="url(#lbar)" stroke="#909090" stroke-width="1"/>
<path d="M517,208.6 H520.6 V390.3 H516" fill="none" stroke="#a0a0a0" stroke-width="1"/>
<line x1="507.20" y1="294.80" x2="520.20" y2="294.80" stroke="#3030c0" stroke-width="1.6" />
<text transform="translate(0,207.80) scale(0.8000,1)" x="634.80 639.82 644.69" y="0" font-size="7.56" fill="#222" text-anchor="middle" font-weight="bold" stroke="#222" stroke-width="0.12" >100</text>
<text transform="translate(0,207.80) scale(0.8000,1)" x="657.31 661.80 666.56" y="0" font-size="7.56" fill="#222" text-anchor="middle" font-weight="bold" stroke="#222" stroke-width="0.12" >+L*</text>
<text transform="translate(0,211.60) scale(0.8000,1)" x="673.93 678.68 683.69 688.57" y="0" font-size="7.56" fill="#222" text-anchor="middle" font-weight="bold" stroke="#222" stroke-width="0.12" >+100</text>
<text transform="translate(0,234.22) scale(0.8000,1)" x="678.81 683.69 688.55" y="0" font-size="7.56" fill="#222" text-anchor="middle" font-weight="bold" stroke="#222" stroke-width="0.12" >+75</text>
<text transform="translate(0,256.85) scale(0.8000,1)" x="678.81 683.68 688.57" y="0" font-size="7.56" fill="#222" text-anchor="middle" font-weight="bold" stroke="#222" stroke-width="0.12" >+50</text>
<text transform="translate(0,279.48) scale(0.8000,1)" x="678.81 683.71 688.55" y="0" font-size="7.56" fill="#222" text-anchor="middle" font-weight="bold" stroke="#222" stroke-width="0.12" >+25</text>
<text transform="translate(0,302.10) scale(1.5851,1)" x="342.60" y="0" font-size="7.56" fill="#222" text-anchor="middle" font-weight="bold" stroke="#222" stroke-width="0.12" >-</text>
<text transform="translate(0,302.10) scale(0.8000,1)" x="683.55 688.56" y="0" font-size="7.56" fill="#222" text-anchor="middle" font-weight="bold" stroke="#222" stroke-width="0.12" >a*</text>
<text transform="translate(0,324.73) scale(1.5851,1)" x="342.60" y="0" font-size="7.56" fill="#222" text-anchor="middle" font-weight="bold" stroke="#222" stroke-width="0.12" >-</text>
<text transform="translate(0,324.73) scale(0.8000,1)" x="683.71 688.55" y="0" font-size="7.56" fill="#222" text-anchor="middle" font-weight="bold" stroke="#222" stroke-width="0.12" >25</text>
<text transform="translate(0,347.35) scale(1.5851,1)" x="342.60" y="0" font-size="7.56" fill="#222" text-anchor="middle" font-weight="bold" stroke="#222" stroke-width="0.12" >-</text>
<text transform="translate(0,347.35) scale(0.8000,1)" x="683.68 688.57" y="0" font-size="7.56" fill="#222" text-anchor="middle" font-weight="bold" stroke="#222" stroke-width="0.12" >50</text>
<text transform="translate(0,369.98) scale(1.5851,1)" x="342.60" y="0" font-size="7.56" fill="#222" text-anchor="middle" font-weight="bold" stroke="#222" stroke-width="0.12" >-</text>
<text transform="translate(0,369.98) scale(0.8000,1)" x="683.69 688.55" y="0" font-size="7.56" fill="#222" text-anchor="middle" font-weight="bold" stroke="#222" stroke-width="0.12" >75</text>
<text transform="translate(0,392.60) scale(1.5851,1)" x="340.14" y="0" font-size="7.56" fill="#222" text-anchor="middle" font-weight="bold" stroke="#222" stroke-width="0.12" >-</text>
<text transform="translate(0,392.60) scale(0.8000,1)" x="678.68 683.69 688.57" y="0" font-size="7.56" fill="#222" text-anchor="middle" font-weight="bold" stroke="#222" stroke-width="0.12" >100</text>
<text transform="translate(0,398.30) scale(0.8000,1)" x="640.63" y="0" font-size="7.56" fill="#222" text-anchor="middle" font-weight="bold" stroke="#222" stroke-width="0.12" >0</text>
<text transform="translate(0,398.30) scale(0.8000,1)" x="659.05 664.06" y="0" font-size="7.56" fill="#222" text-anchor="middle" font-weight="bold" stroke="#222" stroke-width="0.12" >L*</text>
<text transform="translate(0,398.30) scale(1.5851,1)" x="346.13" y="0" font-size="7.56" fill="#222" text-anchor="middle" font-weight="bold" stroke="#222" stroke-width="0.12" >-</text>
<text transform="translate(0,398.30) scale(0.8000,1)" x="690.55 695.57 700.44" y="0" font-size="7.56" fill="#222" text-anchor="middle" font-weight="bold" stroke="#222" stroke-width="0.12" >100</text>
<text transform="translate(0,398.30) scale(1.5851,1)" x="360.85" y="0" font-size="7.56" fill="#222" text-anchor="middle" font-weight="bold" stroke="#222" stroke-width="0.12" >-</text>
<text transform="translate(0,398.30) scale(0.8000,1)" x="719.85 724.71" y="0" font-size="7.56" fill="#222" text-anchor="middle" font-weight="bold" stroke="#222" stroke-width="0.12" >75</text>
<text transform="translate(0,398.30) scale(1.5851,1)" x="374.33" y="0" font-size="7.56" fill="#222" text-anchor="middle" font-weight="bold" stroke="#222" stroke-width="0.12" >-</text>
<text transform="translate(0,398.30) scale(0.8000,1)" x="746.55 751.44" y="0" font-size="7.56" fill="#222" text-anchor="middle" font-weight="bold" stroke="#222" stroke-width="0.12" >50</text>
<text transform="translate(0,398.30) scale(1.5851,1)" x="387.82" y="0" font-size="7.56" fill="#222" text-anchor="middle" font-weight="bold" stroke="#222" stroke-width="0.12" >-</text>
<text transform="translate(0,398.30) scale(0.8000,1)" x="773.30 778.15" y="0" font-size="7.56" fill="#222" text-anchor="middle" font-weight="bold" stroke="#222" stroke-width="0.12" >25</text>
<text transform="translate(0,398.30) scale(1.5851,1)" x="401.30" y="0" font-size="7.56" fill="#222" text-anchor="middle" font-weight="bold" stroke="#222" stroke-width="0.12" >-</text>
<text transform="translate(0,398.30) scale(0.8000,1)" x="799.91 804.87" y="0" font-size="7.56" fill="#222" text-anchor="middle" font-weight="bold" stroke="#222" stroke-width="0.12" >b*</text>
<text transform="translate(0,398.30) scale(0.8000,1)" x="821.84 826.74 831.58" y="0" font-size="7.56" fill="#222" text-anchor="middle" font-weight="bold" stroke="#222" stroke-width="0.12" >+25</text>
<text transform="translate(0,398.30) scale(0.8000,1)" x="848.56 853.43 858.32" y="0" font-size="7.56" fill="#222" text-anchor="middle" font-weight="bold" stroke="#222" stroke-width="0.12" >+50</text>
<text transform="translate(0,398.30) scale(0.8000,1)" x="875.28 880.16 885.02" y="0" font-size="7.56" fill="#222" text-anchor="middle" font-weight="bold" stroke="#222" stroke-width="0.12" >+75</text>
<text transform="translate(0,398.30) scale(0.8000,1)" x="899.56 904.30 909.32 914.19" y="0" font-size="7.56" fill="#222" text-anchor="middle" font-weight="bold" stroke="#222" stroke-width="0.12" >+100</text>
<text transform="translate(0,206.40) scale(0.8000,1)" x="795.12 799.91 804.87" y="0" font-size="7.56" fill="#222" text-anchor="middle" font-weight="bold" stroke="#222" stroke-width="0.12" >+b*</text>
<text transform="translate(0,302.10) scale(0.8000,1)" x="913.06 917.80 922.81" y="0" font-size="7.56" fill="#222" text-anchor="middle" font-weight="bold" stroke="#222" stroke-width="0.12" >+a*</text>
<circle cx="702.5" cy="224.2" r="1.6" fill="#333"/>
<rect x="503.70" y="418.00" width="244.10" height="23.25" fill="#38a6f4" />
<text transform="translate(0,431.60) scale(0.7808,1)" x="654.04" y="0" font-size="13.37" fill="#e6f4ff" text-anchor="middle" font-weight="normal" stroke="#e6f4ff" stroke-width="0.12" >T</text>
<text transform="translate(0,431.60) scale(0.8000,1)" x="646.04 653.77 661.35" y="0" font-size="13.37" fill="#e6f4ff" text-anchor="middle" font-weight="normal" stroke="#e6f4ff" stroke-width="0.12" >est</text>
<text transform="translate(0,431.60) scale(0.7669,1)" x="705.99" y="0" font-size="13.37" fill="#e6f4ff" text-anchor="middle" font-weight="normal" stroke="#e6f4ff" stroke-width="0.12" >S</text>
<text transform="translate(0,431.60) scale(0.8000,1)" x="684.42 692.16 699.69 707.53" y="0" font-size="13.37" fill="#e6f4ff" text-anchor="middle" font-weight="normal" stroke="#e6f4ff" stroke-width="0.12" >top!</text>
<rect x="653.75" y="420.00" width="55.75" height="13.25" fill="#ffffff" stroke="#1f63c6" stroke-width="1"/>
<text transform="translate(0,431.05) scale(0.7681,1)" x="856.76" y="0" font-size="13.37" fill="#111" text-anchor="middle" font-weight="normal" stroke="#111" stroke-width="0.12" >T</text>
<text transform="translate(0,431.05) scale(0.8000,1)" x="830.16 837.76 845.32 852.84 860.41" y="0" font-size="13.37" fill="#111" text-anchor="middle" font-weight="normal" stroke="#111" stroke-width="0.12" >:43.0</text>
<text transform="translate(0,431.05) scale(0.6199,1)" x="1120.14" y="0" font-size="13.37" fill="#111" text-anchor="middle" font-weight="normal" stroke="#111" stroke-width="0.12" >m</text>
<text transform="translate(0,431.05) scale(0.8000,1)" x="875.59" y="0" font-size="13.37" fill="#111" text-anchor="middle" font-weight="normal" stroke="#111" stroke-width="0.12" >s</text>
<rect x="712.50" y="420.00" width="25.50" height="13.25" fill="#ffffff" stroke="#1f63c6" stroke-width="1"/>
<text transform="translate(0,431.05) scale(0.8000,1)" x="894.80 902.62 910.02 917.16" y="0" font-size="13.37" fill="#d42836" text-anchor="middle" font-weight="normal" stroke="#d42836" stroke-width="0.12" >Lock</text>
<rect x="503.70" y="439.95" width="244.10" height="1.30" fill="#3a7cba" />
<rect x="507.00" y="434.50" width="236.75" height="3.00" fill="#ffffff" />
<circle cx="615" cy="423.8" r="2.1" fill="#ffffff"/><circle cx="625.5" cy="423.8" r="2.1" fill="#000"/><circle cx="635.5" cy="423.8" r="2.1" fill="#000"/>
<rect x="503.70" y="441.25" width="244.10" height="31.35" fill="url(#tb)" />
<path d="M522.71,448.90 L533.71,454.50 L522.71,460.10 z" fill="#7ee21c"/>
<path d="M570.13,448.90 L579.53,454.50 L570.13,460.10 z" fill="#7ee21c"/>
<rect x="579.53" y="448.90" width="3.80" height="11.20" fill="#7ee21c" />
<rect x="620.55" y="449.00" width="10.40" height="11.00" fill="#c4c4c4" />
<rect x="668.87" y="448.10" width="11.4" height="12.0" rx="1.6" fill="#7ee21c"/>
<path d="M670.97,448.50 V451.90 H678.17 V448.50" fill="none" stroke="#1c2a10" stroke-width="1.1"/>
<rect x="672.97" y="448.90" width="3.00" height="2.00" fill="#a8f060" />
<path d="M670.57,459.90 V454.30 H678.57 V459.90" fill="none" stroke="#1c2a10" stroke-width="1.1"/>
<path d="M716.39,460.30 L716.39,450.70 L720.39,450.70 L721.79,452.30 L728.19,452.30 L728.19,454.70" fill="none" stroke="#5aa818" stroke-width="1.3"/>
<path d="M715.99,460.70 L719.39,454.90 L731.39,454.90 L727.99,460.70 z" fill="#7ee21c"/>
<circle cx="728.99" cy="449.10" r="1.1" fill="#5aa818"/>
<path d="M724.99,450.30 Q726.99,447.90 728.39,448.70" fill="none" stroke="#5aa818" stroke-width="1"/>
<text transform="translate(0,471.60) scale(0.6618,1)" x="786.45" y="0" font-size="8.43" fill="#6cc81e" text-anchor="middle" font-weight="bold" stroke="#6cc81e" stroke-width="0.12" >C</text>
<text transform="translate(0,471.60) scale(0.8000,1)" x="655.24 660.14 664.89 669.64" y="0" font-size="8.43" fill="#6cc81e" text-anchor="middle" font-weight="bold" stroke="#6cc81e" stroke-width="0.12" >ali.</text>
<text transform="translate(0,471.60) scale(0.6189,1)" x="919.91" y="0" font-size="8.43" fill="#6cc81e" text-anchor="middle" font-weight="bold" stroke="#6cc81e" stroke-width="0.12" >M</text>
<text transform="translate(0,471.60) scale(0.8000,1)" x="716.39 721.01 725.94 730.67" y="0" font-size="8.43" fill="#6cc81e" text-anchor="middle" font-weight="bold" stroke="#6cc81e" stroke-width="0.12" >eas.</text>
<text transform="translate(0,471.60) scale(0.7223,1)" x="858.48" y="0" font-size="8.43" fill="#7c7c7c" text-anchor="middle" font-weight="bold" stroke="#7c7c7c" stroke-width="0.12" >S</text>
<text transform="translate(0,471.60) scale(0.8000,1)" x="779.81 784.56 789.21" y="0" font-size="8.43" fill="#7c7c7c" text-anchor="middle" font-weight="bold" stroke="#7c7c7c" stroke-width="0.12" >top</text>
<text transform="translate(0,471.60) scale(0.7223,1)" x="926.07" y="0" font-size="8.43" fill="#6cc81e" text-anchor="middle" font-weight="bold" stroke="#6cc81e" stroke-width="0.12" >S</text>
<text transform="translate(0,471.60) scale(0.8000,1)" x="840.69" y="0" font-size="8.43" fill="#6cc81e" text-anchor="middle" font-weight="bold" stroke="#6cc81e" stroke-width="0.12" >a</text>
<text transform="translate(0,471.60) scale(0.7899,1)" x="856.40" y="0" font-size="8.43" fill="#6cc81e" text-anchor="middle" font-weight="bold" stroke="#6cc81e" stroke-width="0.12" >v</text>
<text transform="translate(0,471.60) scale(0.8000,1)" x="850.32" y="0" font-size="8.43" fill="#6cc81e" text-anchor="middle" font-weight="bold" stroke="#6cc81e" stroke-width="0.12" >e</text>
<text transform="translate(0,471.60) scale(0.6228,1)" x="1152.36" y="0" font-size="8.43" fill="#6cc81e" text-anchor="middle" font-weight="bold" stroke="#6cc81e" stroke-width="0.12" >O</text>
<text transform="translate(0,471.60) scale(0.8000,1)" x="901.76 906.59 911.35" y="0" font-size="8.43" fill="#6cc81e" text-anchor="middle" font-weight="bold" stroke="#6cc81e" stroke-width="0.12" >pen</text>
<text transform="translate(0,27.00) scale(0.6560,1)" x="1153.05" y="0" font-size="17.15" fill="#f0f0f0" text-anchor="middle" font-weight="normal" >O</text>
<text transform="translate(0,27.00) scale(0.7000,1)" x="1092.00 1103.43 1114.61" y="0" font-size="17.15" fill="#f0f0f0" text-anchor="middle" font-weight="normal" >HSP</text>
<text transform="translate(0,27.00) scale(1.4902,1)" x="529.06" y="0" font-size="17.15" fill="#f0f0f0" text-anchor="middle" font-weight="normal" >-</text>
<text transform="translate(0,27.00) scale(0.7000,1)" x="1137.66 1149.16 1160.57 1172.00" y="0" font-size="17.15" fill="#f0f0f0" text-anchor="middle" font-weight="normal" >650T</text>
<rect x="919.30" y="14.60" width="10.9" height="13.6" rx="1.2" fill="#ffffff"/>
<rect x="920.90" y="16.20" width="7.70" height="5.00" fill="#141414" />
<rect x="921.60" y="16.60" width="1.30" height="4.20" fill="#8a8a8a" />
<rect x="924.10" y="16.60" width="1.30" height="4.20" fill="#8a8a8a" />
<rect x="926.60" y="16.60" width="1.30" height="4.20" fill="#8a8a8a" />
<rect x="921.30" y="24.30" width="6.8" height="1.9" rx="0.9" fill="#141414"/>
<rect x="935.25" y="16.15" width="13.8" height="9.2" rx="2" fill="#141414" stroke="#fff" stroke-width="1.5"/>
<rect x="937.20" y="17.60" width="8.60" height="6.40" fill="#f4f4f4" />
<rect x="949.70" y="18.60" width="1.20" height="4.40" fill="#fff" />
<text transform="translate(0,27.00) scale(0.7400,1)" x="1294.47 1305.73 1316.72 1327.79 1338.80" y="0" font-size="16.57" fill="#f0f0f0" text-anchor="middle" font-weight="normal" >15:33</text>
<rect x="747.20" y="30.00" width="1.20" height="23.00" fill="#5cb4f0" />
<text transform="translate(0,48.60) scale(0.7800,1)" x="976.86 986.92 996.77 1007.23 1017.37" y="0" font-size="16.43" fill="#d6f3ff" text-anchor="middle" font-weight="normal" stroke="#d6f3ff" stroke-width="0.2" >Stan.</text>
<text transform="translate(0,48.60) scale(0.7796,1)" x="1063.02" y="0" font-size="16.43" fill="#d6f3ff" text-anchor="middle" font-weight="normal" stroke="#d6f3ff" stroke-width="0.2" >D</text>
<text transform="translate(0,48.60) scale(0.7800,1)" x="1072.54 1082.95 1092.79" y="0" font-size="16.43" fill="#d6f3ff" text-anchor="middle" font-weight="normal" stroke="#d6f3ff" stroke-width="0.2" >ata</text>
<text transform="translate(0,48.60) scale(0.7291,1)" x="1215.85" y="0" font-size="16.43" fill="#d6f3ff" text-anchor="middle" font-weight="normal" stroke="#d6f3ff" stroke-width="0.2" >C</text>
<text transform="translate(0,48.60) scale(0.7800,1)" x="1146.69 1156.45 1166.99 1177.12" y="0" font-size="16.43" fill="#d6f3ff" text-anchor="middle" font-weight="normal" stroke="#d6f3ff" stroke-width="0.2" >hro.</text>
<text transform="translate(0,48.60) scale(0.7800,1)" x="1222.50 1232.64 1242.69 1252.88" y="0" font-size="16.43" fill="#c8283e" text-anchor="middle" font-weight="normal" stroke="#c8283e" stroke-width="0.3" >Set.</text>
<rect x="747.80" y="53.40" width="249.00" height="1.20" fill="#3c84c4" />
<rect x="934.50" y="52.10" width="62.00" height="2.50" fill="#a8304e" />
<rect x="767.60" y="56.40" width="208.40" height="360.30" fill="#f4f4f4" />
<rect x="767.60" y="56.40" width="208.40" height="26.60" fill="#cbeafb" />
<rect x="767.60" y="390.50" width="208.40" height="26.20" fill="#c8eafc" />
<rect x="767.60" y="82.60" width="1.40" height="307.90" fill="#cfeafa" />
<rect x="974.60" y="82.60" width="1.40" height="307.90" fill="#cfeafa" />
<text transform="translate(0,75.60) scale(0.8257,1)" x="1002.18" y="0" font-size="16.86" fill="#1a1a1a" text-anchor="middle" font-weight="normal" stroke="#1a1a1a" stroke-width="0.2" >T</text>
<text transform="translate(0,75.60) scale(0.8400,1)" x="994.90 1004.71 1014.34 1034.00 1043.71 1053.39 1063.15 1072.98 1082.73 1092.69" y="0" font-size="16.86" fill="#1a1a1a" text-anchor="middle" font-weight="normal" stroke="#1a1a1a" stroke-width="0.2" >estsetting</text>
<text transform="translate(0,114.40) scale(0.8000,1)" x="969.47 979.31 989.84 1000.05" y="0" font-size="16.28" fill="#1a1a1a" text-anchor="middle" font-weight="normal" stroke="#1a1a1a" stroke-width="0.12" >Save</text>
<text transform="translate(0,114.40) scale(0.6859,1)" x="1190.15" y="0" font-size="16.28" fill="#1a1a1a" text-anchor="middle" font-weight="normal" stroke="#1a1a1a" stroke-width="0.12" >m</text>
<text transform="translate(0,114.40) scale(0.8000,1)" x="1030.59 1040.96 1050.98" y="0" font-size="16.28" fill="#1a1a1a" text-anchor="middle" font-weight="normal" stroke="#1a1a1a" stroke-width="0.12" >ode</text>
<text transform="translate(0,144.00) scale(0.8000,1)" x="969.47 979.31 989.84 1000.05 1020.34 1030.60" y="0" font-size="16.28" fill="#1a1a1a" text-anchor="middle" font-weight="normal" stroke="#1a1a1a" stroke-width="0.12" >Saveti</text>
<text transform="translate(0,144.00) scale(0.6859,1)" x="1213.91" y="0" font-size="16.28" fill="#1a1a1a" text-anchor="middle" font-weight="normal" stroke="#1a1a1a" stroke-width="0.12" >m</text>
<text transform="translate(0,144.00) scale(0.8000,1)" x="1050.98" y="0" font-size="16.28" fill="#1a1a1a" text-anchor="middle" font-weight="normal" stroke="#1a1a1a" stroke-width="0.12" >e</text>
<text transform="translate(0,174.20) scale(0.7185,1)" x="1079.44" y="0" font-size="16.28" fill="#1a1a1a" text-anchor="middle" font-weight="normal" stroke="#1a1a1a" stroke-width="0.12" >M</text>
<text transform="translate(0,174.20) scale(0.8000,1)" x="979.31 989.84" y="0" font-size="16.28" fill="#1a1a1a" text-anchor="middle" font-weight="normal" stroke="#1a1a1a" stroke-width="0.12" >ax</text>
<text transform="translate(0,174.20) scale(0.7248,1)" x="1115.03" y="0" font-size="16.28" fill="#1a1a1a" text-anchor="middle" font-weight="normal" stroke="#1a1a1a" stroke-width="0.12" >A</text>
<text transform="translate(0,174.20) scale(0.8000,1)" x="1020.42 1030.53 1040.78 1061.16 1071.35 1081.52 1091.66 1101.91" y="0" font-size="16.28" fill="#1a1a1a" text-anchor="middle" font-weight="normal" stroke="#1a1a1a" stroke-width="0.12" >utoTint.</text>
<text transform="translate(0,203.50) scale(0.7248,1)" x="1070.05" y="0" font-size="16.28" fill="#1a1a1a" text-anchor="middle" font-weight="normal" stroke="#1a1a1a" stroke-width="0.12" >A</text>
<text transform="translate(0,203.50) scale(0.8000,1)" x="979.66 989.86 999.63 1009.87 1020.59 1030.61 1050.91 1061.16" y="0" font-size="16.28" fill="#1a1a1a" text-anchor="middle" font-weight="normal" stroke="#1a1a1a" stroke-width="0.12" >verageti</text>
<text transform="translate(0,203.50) scale(0.6859,1)" x="1249.56" y="0" font-size="16.28" fill="#1a1a1a" text-anchor="middle" font-weight="normal" stroke="#1a1a1a" stroke-width="0.12" >m</text>
<text transform="translate(0,203.50) scale(0.8000,1)" x="1081.55" y="0" font-size="16.28" fill="#1a1a1a" text-anchor="middle" font-weight="normal" stroke="#1a1a1a" stroke-width="0.12" >e</text>
<text transform="translate(0,232.80) scale(0.5135,1)" x="1510.36" y="0" font-size="16.28" fill="#1a1a1a" text-anchor="middle" font-weight="normal" stroke="#1a1a1a" stroke-width="0.12" >W</text>
<text transform="translate(0,232.80) scale(0.8000,1)" x="979.31 989.84 1000.05 1020.12 1030.25 1040.77 1051.15 1061.17" y="0" font-size="16.28" fill="#1a1a1a" text-anchor="middle" font-weight="normal" stroke="#1a1a1a" stroke-width="0.12" >aveRange</text>
<text transform="translate(0,262.60) scale(0.8000,1)" x="969.47 979.59 989.50 1000.02 1010.40 1020.06 1030.19 1040.96" y="0" font-size="16.28" fill="#1a1a1a" text-anchor="middle" font-weight="normal" stroke="#1a1a1a" stroke-width="0.12" >Standard</text>
<text transform="translate(0,262.60) scale(0.7041,1)" x="1205.69" y="0" font-size="16.28" fill="#1a1a1a" text-anchor="middle" font-weight="normal" stroke="#1a1a1a" stroke-width="0.12" >O</text>
<text transform="translate(0,262.60) scale(0.8000,1)" x="1071.16 1081.60 1091.73 1101.50 1112.09 1122.30 1132.06" y="0" font-size="16.28" fill="#1a1a1a" text-anchor="middle" font-weight="normal" stroke="#1a1a1a" stroke-width="0.12" >bserver</text>
<text transform="translate(0,292.70) scale(0.8000,1)" x="969.07 979.66 990.03 1000.00 1010.16 1020.41 1030.59 1040.79 1050.56 1061.03 1071.36" y="0" font-size="16.28" fill="#1a1a1a" text-anchor="middle" font-weight="normal" stroke="#1a1a1a" stroke-width="0.12" >LightSource</text>
<text transform="translate(0,322.80) scale(0.7589,1)" x="1021.87" y="0" font-size="16.28" fill="#1a1a1a" text-anchor="middle" font-weight="normal" stroke="#1a1a1a" stroke-width="0.12" >C</text>
<text transform="translate(0,322.80) scale(0.8000,1)" x="979.66 989.84 1000.03 1009.81 1020.41 1030.59 1040.78 1050.98 1060.75 1071.00 1081.52 1091.59 1101.92" y="0" font-size="16.28" fill="#1a1a1a" text-anchor="middle" font-weight="normal" stroke="#1a1a1a" stroke-width="0.12" >olorTolerance</text>
<text transform="translate(0,352.20) scale(0.8000,1)" x="969.47 979.67 989.78 999.74 1009.87 1020.39 1030.78 1040.80" y="0" font-size="16.28" fill="#1a1a1a" text-anchor="middle" font-weight="normal" stroke="#1a1a1a" stroke-width="0.12" >SetRange</text>
<text transform="translate(0,382.30) scale(0.8000,1)" x="969.47 979.25 989.50 1000.02 1010.29" y="0" font-size="16.28" fill="#a8a8a8" text-anchor="middle" font-weight="normal" stroke="#a8a8a8" stroke-width="0.12" >Trans</text>
<text transform="translate(0,382.30) scale(0.6859,1)" x="1190.15" y="0" font-size="16.28" fill="#a8a8a8" text-anchor="middle" font-weight="normal" stroke="#a8a8a8" stroke-width="0.12" >m</text>
<text transform="translate(0,382.30) scale(0.8000,1)" x="1030.60 1040.85 1051.04 1061.16 1071.34 1081.54 1091.66 1101.90" y="0" font-size="16.28" fill="#a8a8a8" text-anchor="middle" font-weight="normal" stroke="#a8a8a8" stroke-width="0.12" >issivity</text>
<text transform="translate(0,114.70) scale(0.7159,1)" x="1279.54" y="0" font-size="16.28" fill="#2a34d2" text-anchor="middle" font-weight="normal" stroke="#2a34d2" stroke-width="0.3" >A</text>
<text transform="translate(0,114.70) scale(0.8400,1)" x="1100.10 1109.61 1119.26" y="0" font-size="16.28" fill="#2a34d2" text-anchor="middle" font-weight="normal" stroke="#2a34d2" stroke-width="0.3" >uto</text>
<text transform="translate(0,144.30) scale(0.8400,1)" x="1100.28 1110.16" y="0" font-size="16.28" fill="#2a34d2" text-anchor="middle" font-weight="normal" stroke="#2a34d2" stroke-width="0.3" >1s</text>
<text transform="translate(0,174.50) scale(0.8400,1)" x="1080.28 1089.85 1099.43 1109.02" y="0" font-size="16.28" fill="#2a34d2" text-anchor="middle" font-weight="normal" stroke="#2a34d2" stroke-width="0.3" >5000</text>
<text transform="translate(0,174.50) scale(0.6775,1)" x="1386.90" y="0" font-size="16.28" fill="#2a34d2" text-anchor="middle" font-weight="normal" stroke="#2a34d2" stroke-width="0.3" >m</text>
<text transform="translate(0,174.50) scale(0.8400,1)" x="1128.25" y="0" font-size="16.28" fill="#2a34d2" text-anchor="middle" font-weight="normal" stroke="#2a34d2" stroke-width="0.3" >s</text>
<text transform="translate(0,203.80) scale(0.8400,1)" x="1104.81" y="0" font-size="16.28" fill="#2a34d2" text-anchor="middle" font-weight="normal" stroke="#2a34d2" stroke-width="0.3" >1</text>
<text transform="translate(0,233.10) scale(0.8400,1)" x="1030.80 1040.33 1049.91 1059.48" y="0" font-size="16.28" fill="#2a34d2" text-anchor="middle" font-weight="normal" stroke="#2a34d2" stroke-width="0.3" >400n</text>
<text transform="translate(0,233.10) scale(0.6775,1)" x="1325.49" y="0" font-size="16.28" fill="#2a34d2" text-anchor="middle" font-weight="normal" stroke="#2a34d2" stroke-width="0.3" >m</text>
<text transform="translate(0,233.10) scale(1.5798,1)" x="578.63" y="0" font-size="16.28" fill="#2a34d2" text-anchor="middle" font-weight="normal" stroke="#2a34d2" stroke-width="0.3" >-</text>
<text transform="translate(0,233.10) scale(0.8400,1)" x="1107.40 1116.99 1126.58 1136.15" y="0" font-size="16.28" fill="#2a34d2" text-anchor="middle" font-weight="normal" stroke="#2a34d2" stroke-width="0.3" >700n</text>
<text transform="translate(0,233.10) scale(0.6775,1)" x="1420.55" y="0" font-size="16.28" fill="#2a34d2" text-anchor="middle" font-weight="normal" stroke="#2a34d2" stroke-width="0.3" >m</text>
<text transform="translate(0,262.90) scale(0.8400,1)" x="1088.26 1098.07 1107.65" y="0" font-size="16.28" fill="#2a34d2" text-anchor="middle" font-weight="normal" stroke="#2a34d2" stroke-width="0.3" >10°</text>
<text transform="translate(0,293.00) scale(0.8015,1)" x="1146.10" y="0" font-size="16.28" fill="#2a34d2" text-anchor="middle" font-weight="normal" stroke="#2a34d2" stroke-width="0.3" >D</text>
<text transform="translate(0,293.00) scale(0.8400,1)" x="1103.37 1113.02" y="0" font-size="16.28" fill="#2a34d2" text-anchor="middle" font-weight="normal" stroke="#2a34d2" stroke-width="0.3" >65</text>
<text transform="translate(0,323.10) scale(0.8400,1)" x="1095.03 1104.61 1114.21" y="0" font-size="16.28" fill="#2a34d2" text-anchor="middle" font-weight="normal" stroke="#2a34d2" stroke-width="0.3" >0.5</text>
<text transform="translate(0,352.50) scale(0.8400,1)" x="1030.32 1039.85 1049.43 1059.01" y="0" font-size="16.28" fill="#2a34d2" text-anchor="middle" font-weight="normal" stroke="#2a34d2" stroke-width="0.3" >400n</text>
<text transform="translate(0,352.50) scale(0.6775,1)" x="1324.90" y="0" font-size="16.28" fill="#2a34d2" text-anchor="middle" font-weight="normal" stroke="#2a34d2" stroke-width="0.3" >m</text>
<text transform="translate(0,352.50) scale(1.5798,1)" x="578.38" y="0" font-size="16.28" fill="#2a34d2" text-anchor="middle" font-weight="normal" stroke="#2a34d2" stroke-width="0.3" >-</text>
<text transform="translate(0,352.50) scale(0.8400,1)" x="1106.93 1116.52 1126.10 1135.67" y="0" font-size="16.28" fill="#2a34d2" text-anchor="middle" font-weight="normal" stroke="#2a34d2" stroke-width="0.3" >700n</text>
<text transform="translate(0,352.50) scale(0.6775,1)" x="1419.96" y="0" font-size="16.28" fill="#2a34d2" text-anchor="middle" font-weight="normal" stroke="#2a34d2" stroke-width="0.3" >m</text>
<rect x="918.9" y="367.0" width="19.0" height="19.2" fill="#ffffff" stroke="#707070" stroke-width="1.2"/>
<text transform="translate(0,408.60) scale(0.6997,1)" x="1228.89" y="0" font-size="16.28" fill="#1a1a1a" text-anchor="middle" font-weight="normal" stroke="#1a1a1a" stroke-width="0.12" >Q</text>
<text transform="translate(0,408.60) scale(0.8000,1)" x="1084.95 1095.07 1105.12" y="0" font-size="16.28" fill="#1a1a1a" text-anchor="middle" font-weight="normal" stroke="#1a1a1a" stroke-width="0.12" >uit</text>
<rect x="747.80" y="417.50" width="249.00" height="23.70" fill="#38a6f4" />
<text transform="translate(0,431.10) scale(0.7808,1)" x="967.57" y="0" font-size="13.37" fill="#e6f4ff" text-anchor="middle" font-weight="normal" stroke="#e6f4ff" stroke-width="0.12" >T</text>
<text transform="translate(0,431.10) scale(0.8000,1)" x="952.04 959.77 967.35" y="0" font-size="13.37" fill="#e6f4ff" text-anchor="middle" font-weight="normal" stroke="#e6f4ff" stroke-width="0.12" >est</text>
<text transform="translate(0,431.10) scale(0.7669,1)" x="1025.20" y="0" font-size="13.37" fill="#e6f4ff" text-anchor="middle" font-weight="normal" stroke="#e6f4ff" stroke-width="0.12" >S</text>
<text transform="translate(0,431.10) scale(0.8000,1)" x="990.42 998.16 1005.69 1013.53" y="0" font-size="13.37" fill="#e6f4ff" text-anchor="middle" font-weight="normal" stroke="#e6f4ff" stroke-width="0.12" >top!</text>
<rect x="900.50" y="419.30" width="57.30" height="14.10" fill="#ffffff" stroke="#1f63c6" stroke-width="1"/>
<text transform="translate(0,431.20) scale(0.7681,1)" x="1178.01" y="0" font-size="13.37" fill="#111" text-anchor="middle" font-weight="normal" stroke="#111" stroke-width="0.12" >T</text>
<text transform="translate(0,431.20) scale(0.8000,1)" x="1138.59 1146.20 1153.76 1161.28 1168.84" y="0" font-size="13.37" fill="#111" text-anchor="middle" font-weight="normal" stroke="#111" stroke-width="0.12" >:43.0</text>
<text transform="translate(0,431.20) scale(0.6199,1)" x="1518.19" y="0" font-size="13.37" fill="#111" text-anchor="middle" font-weight="normal" stroke="#111" stroke-width="0.12" >m</text>
<text transform="translate(0,431.20) scale(0.8000,1)" x="1184.02" y="0" font-size="13.37" fill="#111" text-anchor="middle" font-weight="normal" stroke="#111" stroke-width="0.12" >s</text>
<rect x="960.40" y="419.30" width="27.50" height="14.10" fill="#ffffff" stroke="#1f63c6" stroke-width="1"/>
<text transform="translate(0,431.20) scale(0.8000,1)" x="1204.67 1212.50 1219.89 1227.04" y="0" font-size="13.37" fill="#d42836" text-anchor="middle" font-weight="normal" stroke="#d42836" stroke-width="0.12" >Lock</text>
<rect x="747.80" y="439.90" width="249.00" height="1.30" fill="#3a7cba" />
<rect x="752.00" y="434.70" width="240.30" height="3.90" fill="#ffffff" />
<rect x="747.80" y="441.20" width="249.00" height="31.60" fill="url(#tb)" />
<path d="M767.30,448.90 L778.30,454.50 L767.30,460.10 z" fill="#7ee21c"/>
<path d="M815.70,448.90 L825.10,454.50 L815.70,460.10 z" fill="#7ee21c"/>
<rect x="825.10" y="448.90" width="3.80" height="11.20" fill="#7ee21c" />
<rect x="867.10" y="449.00" width="10.40" height="11.00" fill="#c4c4c4" />
<rect x="916.40" y="448.10" width="11.4" height="12.0" rx="1.6" fill="#7ee21c"/>
<path d="M918.50,448.50 V451.90 H925.70 V448.50" fill="none" stroke="#1c2a10" stroke-width="1.1"/>
<rect x="920.50" y="448.90" width="3.00" height="2.00" fill="#a8f060" />
<path d="M918.10,459.90 V454.30 H926.10 V459.90" fill="none" stroke="#1c2a10" stroke-width="1.1"/>
<path d="M964.90,460.30 L964.90,450.70 L968.90,450.70 L970.30,452.30 L976.70,452.30 L976.70,454.70" fill="none" stroke="#5aa818" stroke-width="1.3"/>
<path d="M964.50,460.70 L967.90,454.90 L979.90,454.90 L976.50,460.70 z" fill="#7ee21c"/>
<circle cx="977.50" cy="449.10" r="1.1" fill="#5aa818"/>
<path d="M973.50,450.30 Q975.50,447.90 976.90,448.70" fill="none" stroke="#5aa818" stroke-width="1"/>
<text transform="translate(0,471.60) scale(0.6618,1)" x="1156.03" y="0" font-size="8.43" fill="#6cc81e" text-anchor="middle" font-weight="bold" stroke="#6cc81e" stroke-width="0.12" >C</text>
<text transform="translate(0,471.60) scale(0.8000,1)" x="960.97 965.88 970.63 975.38" y="0" font-size="8.43" fill="#6cc81e" text-anchor="middle" font-weight="bold" stroke="#6cc81e" stroke-width="0.12" >ali.</text>
<text transform="translate(0,471.60) scale(0.6189,1)" x="1316.69" y="0" font-size="8.43" fill="#6cc81e" text-anchor="middle" font-weight="bold" stroke="#6cc81e" stroke-width="0.12" >M</text>
<text transform="translate(0,471.60) scale(0.8000,1)" x="1023.35 1027.97 1032.90 1037.63" y="0" font-size="8.43" fill="#6cc81e" text-anchor="middle" font-weight="bold" stroke="#6cc81e" stroke-width="0.12" >eas.</text>
<text transform="translate(0,471.60) scale(0.7223,1)" x="1199.82" y="0" font-size="8.43" fill="#7c7c7c" text-anchor="middle" font-weight="bold" stroke="#7c7c7c" stroke-width="0.12" >S</text>
<text transform="translate(0,471.60) scale(0.8000,1)" x="1088.00 1092.75 1097.40" y="0" font-size="8.43" fill="#7c7c7c" text-anchor="middle" font-weight="bold" stroke="#7c7c7c" stroke-width="0.12" >top</text>
<text transform="translate(0,471.60) scale(0.7223,1)" x="1268.77" y="0" font-size="8.43" fill="#6cc81e" text-anchor="middle" font-weight="bold" stroke="#6cc81e" stroke-width="0.12" >S</text>
<text transform="translate(0,471.60) scale(0.8000,1)" x="1150.10" y="0" font-size="8.43" fill="#6cc81e" text-anchor="middle" font-weight="bold" stroke="#6cc81e" stroke-width="0.12" >a</text>
<text transform="translate(0,471.60) scale(0.7899,1)" x="1169.77" y="0" font-size="8.43" fill="#6cc81e" text-anchor="middle" font-weight="bold" stroke="#6cc81e" stroke-width="0.12" >v</text>
<text transform="translate(0,471.60) scale(0.8000,1)" x="1159.73" y="0" font-size="8.43" fill="#6cc81e" text-anchor="middle" font-weight="bold" stroke="#6cc81e" stroke-width="0.12" >e</text>
<text transform="translate(0,471.60) scale(0.6228,1)" x="1551.38" y="0" font-size="8.43" fill="#6cc81e" text-anchor="middle" font-weight="bold" stroke="#6cc81e" stroke-width="0.12" >O</text>
<text transform="translate(0,471.60) scale(0.8000,1)" x="1212.40 1217.23 1221.98" y="0" font-size="8.43" fill="#6cc81e" text-anchor="middle" font-weight="bold" stroke="#6cc81e" stroke-width="0.12" >pen</text></svg>
</body></html>
